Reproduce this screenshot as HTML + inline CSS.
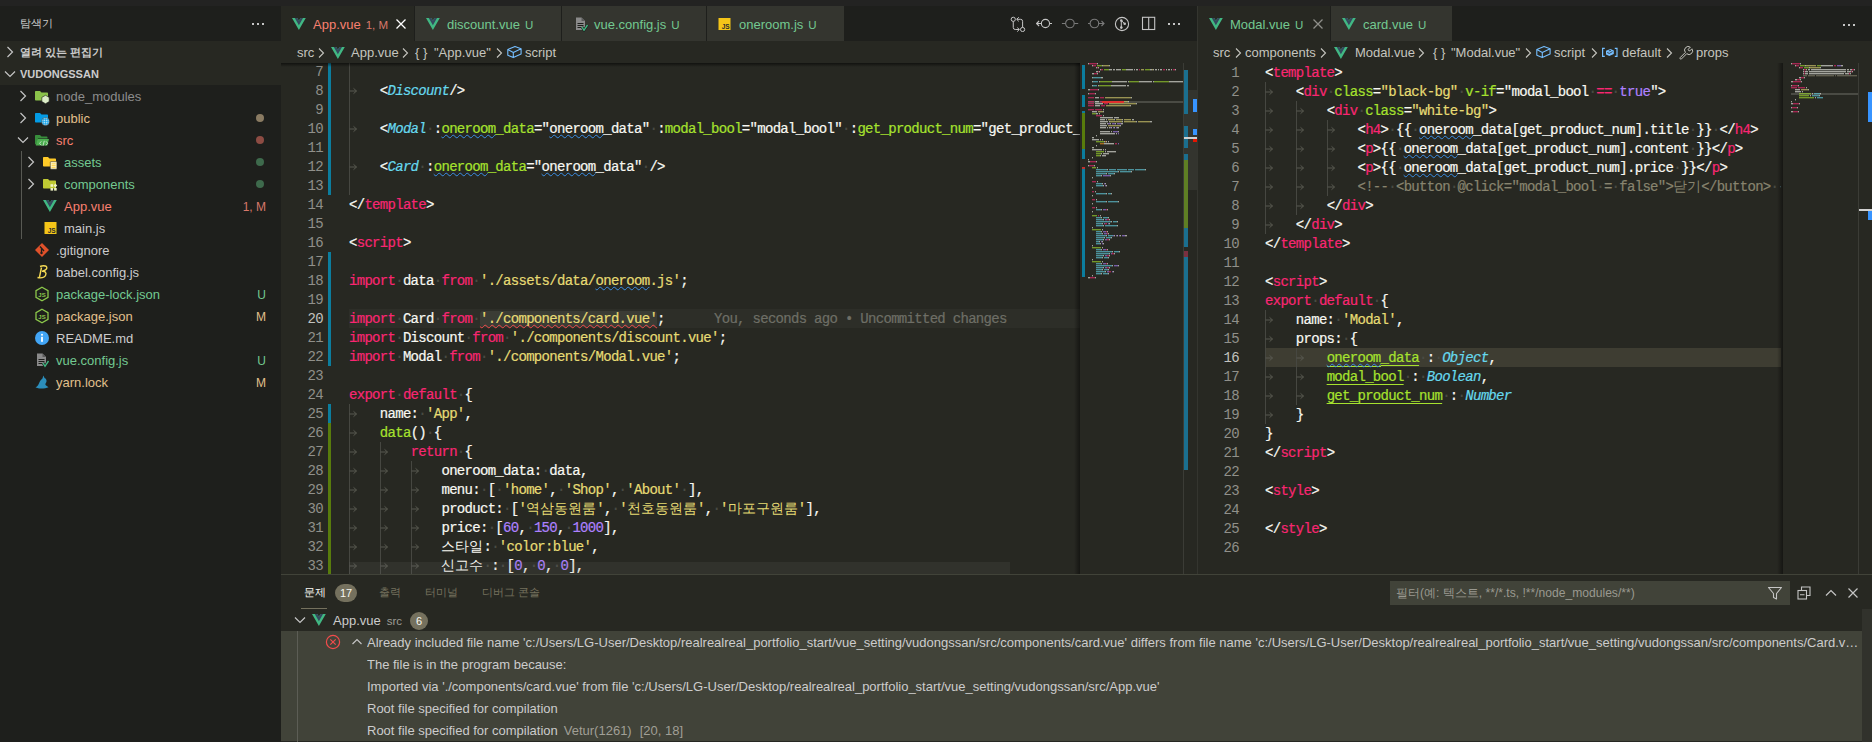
<!DOCTYPE html>
<html><head><meta charset="utf-8"><title>VS Code</title>
<style>
*{margin:0;padding:0;box-sizing:border-box}
html,body{width:1872px;height:742px;overflow:hidden;background:#1e1f1c}
body{position:relative;font-family:"Liberation Sans",sans-serif;font-size:13px;color:#cccccc}
.abs{position:absolute}
.code{position:absolute;white-space:pre;padding-top:1px;-webkit-text-stroke:0.2px currentColor;font-family:"Liberation Mono",monospace;font-size:14px;letter-spacing:-0.7px;line-height:19px;height:19px;color:#f8f8f2}
.ln{position:absolute;padding-top:1px;font-family:"Liberation Mono",monospace;font-size:14px;letter-spacing:-0.7px;line-height:19px;color:#90908a;text-align:right;width:40px}
.p{color:#f8f8f2}.t{color:#f92672}.k{color:#f92672}.c{color:#66d9ef;font-style:italic}.a{color:#a6e22e}
.s{color:#e6db74}.n{color:#ae81ff}.f{color:#a6e22e}.cm{color:#88846f}.cm .ws{color:#4a4b44}.ty{color:#66d9ef;font-style:italic}
.ws{color:#4a4b44}
.hg{font-size:13.6px;letter-spacing:0;-webkit-text-stroke:0}
.sq{text-decoration:underline wavy #3a8ee6;text-decoration-thickness:1px;text-underline-offset:1px;text-decoration-skip-ink:none}
.ul{text-decoration:underline solid #a6e22e;text-decoration-thickness:1px;text-underline-offset:3px}
.ul.sq{text-decoration:underline wavy #3a8ee6;text-decoration-thickness:1px;text-underline-offset:1px;text-decoration-skip-ink:none;border-bottom:1px solid #a6e22e}
.err{background:#3b3c35;border-radius:3px;text-decoration:underline wavy #f14c4c;text-decoration-thickness:1px;text-underline-offset:1px;text-decoration-skip-ink:none}
.guide{position:absolute;width:1px;background:#464741}
.row{position:absolute;left:0;width:281px;height:22px;line-height:22px;white-space:nowrap;padding-top:1px}
.ui{font-family:"Liberation Sans",sans-serif}
.tab{position:absolute;top:7px;height:35px;line-height:35px;white-space:nowrap;font-size:13px}
.bc{position:absolute;top:42px;height:22px;line-height:22px;white-space:nowrap;font-size:13px;color:#c5c5bf}
.chev{position:absolute}
</style></head><body>

<div class="abs" style="left:0;top:0;width:1872px;height:6px;background:#232322"></div>
<div class="abs" style="left:0;top:6px;width:281px;height:736px;background:#1e1f1c"></div>
<div class="abs ui" style="left:20px;top:6px;height:35px;line-height:35px;font-size:11px;color:#cccccc">탐색기</div>
<div class="abs" style="left:252px;top:23px;width:2px;height:2px;background:#c5c5c5"></div><div class="abs" style="left:257px;top:23px;width:2px;height:2px;background:#c5c5c5"></div><div class="abs" style="left:262px;top:23px;width:2px;height:2px;background:#c5c5c5"></div>
<div class="abs" style="left:0;top:41px;width:281px;height:44px;background:#272822"></div>
<svg class="abs" style="left:2px;top:44px" width="16" height="16" viewBox="0 0 16 16"><path d="M5.5 3 L10.5 8 L5.5 13" fill="none" stroke="#c5c5c5" stroke-width="1.2"/></svg>
<div class="abs ui" style="left:20px;top:41px;height:22px;line-height:22px;font-size:11px;font-weight:bold;color:#cccccc">열려 있는 편집기</div>
<svg class="abs" style="left:2px;top:66px" width="16" height="16" viewBox="0 0 16 16"><path d="M3 5.5 L8 10.5 L13 5.5" fill="none" stroke="#c5c5c5" stroke-width="1.2"/></svg>
<div class="abs ui" style="left:20px;top:63px;height:22px;line-height:22px;font-size:11px;font-weight:bold;color:#cccccc">VUDONGSSAN</div>
<svg class="abs" style="left:15px;top:88px" width="16" height="16" viewBox="0 0 16 16"><path d="M5.5 3 L10.5 8 L5.5 13" fill="none" stroke="#c5c5c5" stroke-width="1.2"/></svg>
<svg class="abs" style="left:34px;top:88px" width="16" height="16" viewBox="0 0 16 16"><path d="M1.8 3 h4.2 l1.5 1.5 h5.7 a0.8 0.8 0 0 1 0.8 0.8 v6.4 a0.8 0.8 0 0 1 -0.8 0.8 h-11.4 a0.8 0.8 0 0 1 -0.8 -0.8 v-7.9 a0.8 0.8 0 0 1 0.8 -0.8z" fill="#8bc34a"/><path d="M11.5 7.3 L15.2 9.4 V13.6 L11.5 15.7 L7.8 13.6 V9.4Z" fill="#dcedc8" stroke="#1e1f1c" stroke-width="0.6"/></svg>
<div class="row ui" style="top:85px;left:56px;width:auto;color:#8c8c8c">node_modules</div>
<svg class="abs" style="left:15px;top:110px" width="16" height="16" viewBox="0 0 16 16"><path d="M5.5 3 L10.5 8 L5.5 13" fill="none" stroke="#c5c5c5" stroke-width="1.2"/></svg>
<svg class="abs" style="left:34px;top:110px" width="16" height="16" viewBox="0 0 16 16"><path d="M1.8 3 h4.2 l1.5 1.5 h5.7 a0.8 0.8 0 0 1 0.8 0.8 v6.4 a0.8 0.8 0 0 1 -0.8 0.8 h-11.4 a0.8 0.8 0 0 1 -0.8 -0.8 v-7.9 a0.8 0.8 0 0 1 0.8 -0.8z" fill="#039be5"/><circle cx="11.5" cy="11.5" r="3.9" fill="#b3e5fc" stroke="#1e1f1c" stroke-width="0.5"/><path d="M7.8 11.5 H15.2 M11.5 7.8 V15.2 M8.4 9.6 H14.6 M8.4 13.4 H14.6 M9.6 8.3 Q8.8 11.5 9.6 14.7 M13.4 8.3 Q14.2 11.5 13.4 14.7" fill="none" stroke="#039be5" stroke-width=".6"/></svg>
<div class="row ui" style="top:107px;left:56px;width:auto;color:#e2c08d">public</div>
<div class="abs" style="left:256px;top:114px;width:8px;height:8px;border-radius:4px;background:#8a7b62"></div>
<svg class="abs" style="left:15px;top:132px" width="16" height="16" viewBox="0 0 16 16"><path d="M3 5.5 L8 10.5 L13 5.5" fill="none" stroke="#c5c5c5" stroke-width="1.2"/></svg>
<svg class="abs" style="left:34px;top:132px" width="16" height="16" viewBox="0 0 16 16"><path d="M1.8 3 h4.2 l1.5 1.5 h5.2 a0.8 .8 0 0 1 .8 .8 v1.2 h-9.5 l-1.7 6 h-.5 a0.8 .8 0 0 1 -.8 -.8 v-7.9 a.8 .8 0 0 1 .8 -.8z" fill="#388e3c"/><path d="M3.5 7 H15 L13.3 13.5 H1.8Z" fill="#4caf50"/><path d="M7.3 9.3 L5.6 11.3 L7.3 13.3 M10.3 8.8 L9 13.8 M12 9.3 L13.7 11.3 L12 13.3" fill="none" stroke="#c8e6c9" stroke-width="0.9"/></svg>
<div class="row ui" style="top:129px;left:56px;width:auto;color:#f88070">src</div>
<div class="abs" style="left:256px;top:136px;width:8px;height:8px;border-radius:4px;background:#8d4c43"></div>
<svg class="abs" style="left:23px;top:154px" width="16" height="16" viewBox="0 0 16 16"><path d="M5.5 3 L10.5 8 L5.5 13" fill="none" stroke="#c5c5c5" stroke-width="1.2"/></svg>
<svg class="abs" style="left:42px;top:154px" width="16" height="16" viewBox="0 0 16 16"><path d="M1.8 3 h4.2 l1.5 1.5 h5.7 a0.8 0.8 0 0 1 0.8 0.8 v6.4 a0.8 0.8 0 0 1 -0.8 0.8 h-11.4 a0.8 0.8 0 0 1 -0.8 -0.8 v-7.9 a0.8 0.8 0 0 1 0.8 -0.8z" fill="#ffca28"/><rect x="8.3" y="7.6" width="6.6" height="7.6" rx="0.6" fill="#fff3c4" stroke="#1e1f1c" stroke-width="0.5"/><path d="M9.6 9.8 H13.6 M9.6 11.6 H13.6 M9.6 13.4 H13.6" stroke="#ffca28" stroke-width=".8"/></svg>
<div class="row ui" style="top:151px;left:64px;width:auto;color:#73c991">assets</div>
<div class="abs" style="left:256px;top:158px;width:8px;height:8px;border-radius:4px;background:#3e6a4c"></div>
<svg class="abs" style="left:23px;top:176px" width="16" height="16" viewBox="0 0 16 16"><path d="M5.5 3 L10.5 8 L5.5 13" fill="none" stroke="#c5c5c5" stroke-width="1.2"/></svg>
<svg class="abs" style="left:42px;top:176px" width="16" height="16" viewBox="0 0 16 16"><path d="M1.8 3 h4.2 l1.5 1.5 h5.7 a0.8 0.8 0 0 1 0.8 0.8 v6.4 a0.8 0.8 0 0 1 -0.8 0.8 h-11.4 a0.8 0.8 0 0 1 -0.8 -0.8 v-7.9 a0.8 0.8 0 0 1 0.8 -0.8z" fill="#c0ca33"/><rect x="8.5" y="8.2" width="2.6" height="2.6" fill="#f0f4c3"/><path d="M13.4 7.6 L15.2 9.5 L13.4 11.4 L11.6 9.5Z" fill="#f0f4c3"/><rect x="8.5" y="12" width="2.6" height="2.6" fill="#f0f4c3"/><rect x="12.1" y="12" width="2.6" height="2.6" fill="#f0f4c3"/></svg>
<div class="row ui" style="top:173px;left:64px;width:auto;color:#73c991">components</div>
<div class="abs" style="left:256px;top:180px;width:8px;height:8px;border-radius:4px;background:#3e6a4c"></div>
<svg class="abs" style="left:43px;top:200px" width="13.8" height="12" viewBox="0 0 261.76 226.69"><path d="M161.096.001l-30.225 52.351L100.647.001H-.005l130.877 226.688L261.749.001z" fill="#41b883"/><path d="M161.096.001l-30.225 52.351L100.647.001H52.346l78.526 136.01L209.398.001z" fill="#35495e"/></svg>
<div class="row ui" style="top:195px;left:64px;width:auto;color:#f88070">App.vue</div>
<div class="row ui" style="top:195px;left:200px;width:66px;text-align:right;font-size:12px;color:#d8786a">1, M</div>
<svg class="abs" style="left:44px;top:221px" width="14" height="14" viewBox="0 0 14 14"><rect x="0.5" y="1" width="12" height="12" fill="#f5c518"/><text x="11.6" y="11.8" font-family="Liberation Sans" font-size="6.5" font-weight="bold" text-anchor="end" fill="#2b2b2b">JS</text></svg>
<div class="row ui" style="top:217px;left:64px;width:auto;color:#cccccc">main.js</div>
<svg class="abs" style="left:34px;top:242px" width="16" height="16" viewBox="0 0 16 16"><path d="M8 1 L15 8 L8 15 L1 8 Z" fill="#e0512a"/><path d="M6 4.5 L10 9 M7.5 6.3 V11" stroke="#1e1f1c" stroke-width="1.3" fill="none"/><circle cx="7.5" cy="11" r="1.2" fill="#1e1f1c"/></svg>
<div class="row ui" style="top:239px;left:56px;width:auto;color:#cccccc">.gitignore</div>
<svg class="abs" style="left:35px;top:264px" width="16" height="16" viewBox="0 0 16 16"><path d="M5 2.5 C9 1 13 2 11.5 4.8 C10.6 6.5 8 7 7 7.3 C10 7 12 8.5 10.5 11.5 C9 14 5 14 2.5 13.5 M6.5 3.5 L4.5 13" fill="none" stroke="#f5da55" stroke-width="1.4"/></svg>
<div class="row ui" style="top:261px;left:56px;width:auto;color:#cccccc">babel.config.js</div>
<svg class="abs" style="left:34px;top:286px" width="16" height="16" viewBox="0 0 16 16"><path d="M8 1.2 L14 4.6 V11.4 L8 14.8 L2 11.4 V4.6 Z" fill="none" stroke="#8cc84b" stroke-width="1.3"/><text x="8" y="11" font-family="Liberation Sans" font-size="6" font-weight="bold" text-anchor="middle" fill="#8cc84b">JS</text></svg>
<div class="row ui" style="top:283px;left:56px;width:auto;color:#73c991">package-lock.json</div>
<div class="row ui" style="top:283px;left:200px;width:66px;text-align:right;font-size:12px;color:#73c991">U</div>
<svg class="abs" style="left:34px;top:308px" width="16" height="16" viewBox="0 0 16 16"><path d="M8 1.2 L14 4.6 V11.4 L8 14.8 L2 11.4 V4.6 Z" fill="none" stroke="#8cc84b" stroke-width="1.3"/><text x="8" y="11" font-family="Liberation Sans" font-size="6" font-weight="bold" text-anchor="middle" fill="#8cc84b">JS</text></svg>
<div class="row ui" style="top:305px;left:56px;width:auto;color:#e2c08d">package.json</div>
<div class="row ui" style="top:305px;left:200px;width:66px;text-align:right;font-size:12px;color:#e2c08d">M</div>
<svg class="abs" style="left:34px;top:330px" width="16" height="16" viewBox="0 0 16 16"><circle cx="8" cy="8" r="7" fill="#42a5f5"/><rect x="7.1" y="6.8" width="1.8" height="5" fill="#fff"/><circle cx="8" cy="4.7" r="1" fill="#fff"/></svg>
<div class="row ui" style="top:327px;left:56px;width:auto;color:#cccccc">README.md</div>
<svg class="abs" style="left:34px;top:352px" width="16" height="16" viewBox="0 0 16 16"><path d="M3 1.5 H8.5 L12 5 V14 H3 Z" fill="#8a8a8a"/><path d="M8.5 1.5 V5 H12" fill="#5a5a5a"/><path d="M4.5 7.5 H10.5 M4.5 9.5 H10.5 M4.5 11.5 H8" stroke="#1e1f1c" stroke-width="1"/><path d="M9 11 L11 14.3 L14.5 9" fill="none" stroke="#1e1f1c" stroke-width="2.6"/><path d="M9 11 L11 14.3 L14.5 9" fill="none" stroke="#41b883" stroke-width="1.4"/></svg>
<div class="row ui" style="top:349px;left:56px;width:auto;color:#73c991">vue.config.js</div>
<div class="row ui" style="top:349px;left:200px;width:66px;text-align:right;font-size:12px;color:#73c991">U</div>
<svg class="abs" style="left:34px;top:374px" width="16" height="16" viewBox="0 0 16 16"><path d="M9.5 1.5 L10.5 4 C12 4.5 12.8 6 12.5 7.5 C12.2 9 11 9.5 11.5 11 L14.5 13.2 C12.5 14 10 14.5 7.5 14.5 C5 14.5 3 14 1.5 13.5 C3 12.8 4 11.5 4.8 9.8 C5.5 8 6.5 6 8.3 4.8 Z" fill="#2c8ebb"/></svg>
<div class="row ui" style="top:371px;left:56px;width:auto;color:#e2c08d">yarn.lock</div>
<div class="row ui" style="top:371px;left:200px;width:66px;text-align:right;font-size:12px;color:#e2c08d">M</div>
<div class="abs" style="left:21px;top:151px;width:1px;height:88px;background:#585953"></div>
<div class="abs" style="left:281px;top:6px;width:916px;height:35px;background:#1e1f1c"></div>
<div class="abs" style="left:281px;top:6px;width:133px;height:35px;background:#272822"></div><svg class="abs" style="left:292px;top:18px" width="13.8" height="12" viewBox="0 0 261.76 226.69"><path d="M161.096.001l-30.225 52.351L100.647.001H-.005l130.877 226.688L261.749.001z" fill="#41b883"/><path d="M161.096.001l-30.225 52.351L100.647.001H52.346l78.526 136.01L209.398.001z" fill="#35495e"/></svg><div class="tab ui" style="left:313px;color:#f88070">App.vue<span style="margin-left:5px;font-size:11.5px;color:#d8786a">1, M</span></div><svg class="abs" style="left:393px;top:16px" width="16" height="16" viewBox="0 0 16 16"><path d="M3.5 3.5 L12.5 12.5 M12.5 3.5 L3.5 12.5" stroke="#ffffff" stroke-width="1.3"/></svg>
<div class="abs" style="left:415px;top:6px;width:146px;height:35px;background:#34352f"></div><svg class="abs" style="left:426px;top:18px" width="13.8" height="12" viewBox="0 0 261.76 226.69"><path d="M161.096.001l-30.225 52.351L100.647.001H-.005l130.877 226.688L261.749.001z" fill="#41b883"/><path d="M161.096.001l-30.225 52.351L100.647.001H52.346l78.526 136.01L209.398.001z" fill="#35495e"/></svg><div class="tab ui" style="left:447px;color:#73c991">discount.vue<span style="margin-left:5px;font-size:11.5px;color:#73c991">U</span></div>
<div class="abs" style="left:562px;top:6px;width:144px;height:35px;background:#34352f"></div><svg class="abs" style="left:573px;top:16px" width="16" height="16" viewBox="0 0 16 16"><path d="M3 1.5 H8.5 L12 5 V14 H3 Z" fill="#8a8a8a"/><path d="M8.5 1.5 V5 H12" fill="#5a5a5a"/><path d="M4.5 7.5 H10.5 M4.5 9.5 H10.5 M4.5 11.5 H8" stroke="#1e1f1c" stroke-width="1"/><path d="M9 11 L11 14.3 L14.5 9" fill="none" stroke="#1e1f1c" stroke-width="2.6"/><path d="M9 11 L11 14.3 L14.5 9" fill="none" stroke="#41b883" stroke-width="1.4"/></svg><div class="tab ui" style="left:594px;color:#73c991">vue.config.js<span style="margin-left:5px;font-size:11.5px;color:#73c991">U</span></div>
<div class="abs" style="left:707px;top:6px;width:137px;height:35px;background:#34352f"></div><svg class="abs" style="left:718px;top:17px" width="14" height="14" viewBox="0 0 14 14"><rect x="0.5" y="1" width="12" height="12" fill="#f5c518"/><text x="11.6" y="11.8" font-family="Liberation Sans" font-size="6.5" font-weight="bold" text-anchor="end" fill="#2b2b2b">JS</text></svg><div class="tab ui" style="left:739px;color:#73c991">oneroom.js<span style="margin-left:5px;font-size:11.5px;color:#73c991">U</span></div>
<svg class="abs" style="left:1010px;top:16px" width="16" height="16" viewBox="0 0 16 16"><circle cx="3.25" cy="3.3" r="2.1" fill="none" stroke="#c5c5c5" stroke-width="1"/><circle cx="12.6" cy="13.5" r="2.1" fill="none" stroke="#c5c5c5" stroke-width="1"/><path d="M3.25 5.4 V11.5 a2 2 0 0 0 2 2 H9.2 M7.2 11.4 L9.3 13.5 L7.2 15.6" fill="none" stroke="#c5c5c5" stroke-width="1"/><path d="M12.6 11.4 V5.3 a2 2 0 0 0 -2 -2 H6.8 M8.8 1.2 L6.7 3.3 L8.8 5.4" fill="none" stroke="#c5c5c5" stroke-width="1"/></svg><svg class="abs" style="left:1036px;top:16px" width="16" height="16" viewBox="0 0 16 16"><circle cx="9.45" cy="7.5" r="4.1" fill="none" stroke="#c5c5c5" stroke-width="1.1"/><path d="M0.6 7.5 H5.3 M13.6 7.5 H16 M3.1 5 L0.6 7.5 L3.1 10" fill="none" stroke="#c5c5c5" stroke-width="1.1"/></svg><svg class="abs" style="left:1060px;top:16px" width="20" height="16" viewBox="0 0 20 16"><circle cx="9.9" cy="7.5" r="4.3" fill="none" stroke="#7a7a7a" stroke-width="1.1"/><path d="M1.9 7.5 H5.6 M14.2 7.5 H18.2" fill="none" stroke="#7a7a7a" stroke-width="1.1"/></svg><svg class="abs" style="left:1086px;top:16px" width="20" height="16" viewBox="0 0 20 16"><circle cx="8.4" cy="7.5" r="4.3" fill="none" stroke="#7a7a7a" stroke-width="1.1"/><path d="M2 7.5 H4.1 M12.7 7.5 H18 M15.5 5 L18 7.5 L15.5 10" fill="none" stroke="#7a7a7a" stroke-width="1.1"/></svg><svg class="abs" style="left:1114px;top:16px" width="16" height="16" viewBox="0 0 16 16"><circle cx="8" cy="8" r="6.6" fill="none" stroke="#c5c5c5" stroke-width="1.1"/><path d="M7.3 4.5 V11.6 M7.3 4.5 L10.7 7.75" fill="none" stroke="#c5c5c5" stroke-width="1"/><circle cx="7.3" cy="4.5" r="1.3" fill="#c5c5c5"/><circle cx="7.3" cy="11.6" r="1.3" fill="#c5c5c5"/><circle cx="10.7" cy="7.75" r="1.3" fill="#c5c5c5"/></svg><svg class="abs" style="left:1141px;top:16px" width="16" height="16" viewBox="0 0 16 16"><rect x="1.5" y="1.3" width="12.2" height="12.2" fill="none" stroke="#c5c5c5" stroke-width="1.1"/><path d="M7.7 1.3 V13.5" stroke="#c5c5c5" stroke-width="1.1"/></svg><div class="abs" style="left:1168px;top:23px;width:2px;height:2px;background:#c5c5c5"></div><div class="abs" style="left:1173px;top:23px;width:2px;height:2px;background:#c5c5c5"></div><div class="abs" style="left:1178px;top:23px;width:2px;height:2px;background:#c5c5c5"></div>
<div class="abs" style="left:281px;top:41px;width:916px;height:22px;background:#272822"></div>
<div class="bc ui" style="left:297px">src</div><svg class="abs" style="left:313px;top:45px" width="16" height="16" viewBox="0 0 16 16"><path d="M6 3.5 L10.5 8 L6 12.5" fill="none" stroke="#c5c5bf" stroke-width="1.1"/></svg><svg class="abs" style="left:331px;top:47px" width="13.8" height="12" viewBox="0 0 261.76 226.69"><path d="M161.096.001l-30.225 52.351L100.647.001H-.005l130.877 226.688L261.749.001z" fill="#41b883"/><path d="M161.096.001l-30.225 52.351L100.647.001H52.346l78.526 136.01L209.398.001z" fill="#35495e"/></svg><div class="bc ui" style="left:351px">App.vue</div><svg class="abs" style="left:397px;top:45px" width="16" height="16" viewBox="0 0 16 16"><path d="M6 3.5 L10.5 8 L6 12.5" fill="none" stroke="#c5c5bf" stroke-width="1.1"/></svg><div class="bc ui" style="left:415px">{ }</div><div class="bc ui" style="left:434px">"App.vue"</div><svg class="abs" style="left:491px;top:45px" width="16" height="16" viewBox="0 0 16 16"><path d="M6 3.5 L10.5 8 L6 12.5" fill="none" stroke="#c5c5bf" stroke-width="1.1"/></svg><svg class="abs" style="left:507px;top:45px" width="16" height="16" viewBox="0 0 16 16"><path d="M0.8 4.4 L8 1.4 L14.1 3.7 V9.1 L6.3 12.6 L0.8 10.2 Z M0.8 4.4 L6.3 7.4 L14.1 3.7 M6.3 7.4 V12.6" fill="none" stroke="#75beff" stroke-width="1.1" stroke-linejoin="round"/></svg><div class="bc ui" style="left:525px">script</div>
<div class="abs" style="left:281px;top:63px;width:916px;height:511px;background:#272822"></div>
<div class="abs" style="left:349px;top:309px;width:731px;height:19px;background:#2d2e28"></div>
<div class="abs" style="left:328px;top:62px;width:3px;height:133px;background:#0c7d9d"></div>
<div class="abs" style="left:328px;top:252px;width:3px;height:114px;background:#0c7d9d"></div>
<div class="abs" style="left:328px;top:404px;width:3px;height:19px;background:#0c7d9d"></div>
<div class="abs" style="left:328px;top:423px;width:3px;height:151px;background:#587c0c"></div>
<div class="ln" style="left:283px;top:62px;color:#90908a">7</div>
<div class="ln" style="left:283px;top:81px;color:#90908a">8</div>
<div class="ln" style="left:283px;top:100px;color:#90908a">9</div>
<div class="ln" style="left:283px;top:119px;color:#90908a">10</div>
<div class="ln" style="left:283px;top:138px;color:#90908a">11</div>
<div class="ln" style="left:283px;top:157px;color:#90908a">12</div>
<div class="ln" style="left:283px;top:176px;color:#90908a">13</div>
<div class="ln" style="left:283px;top:195px;color:#90908a">14</div>
<div class="ln" style="left:283px;top:214px;color:#90908a">15</div>
<div class="ln" style="left:283px;top:233px;color:#90908a">16</div>
<div class="ln" style="left:283px;top:252px;color:#90908a">17</div>
<div class="ln" style="left:283px;top:271px;color:#90908a">18</div>
<div class="ln" style="left:283px;top:290px;color:#90908a">19</div>
<div class="ln" style="left:283px;top:309px;color:#c2c2bf">20</div>
<div class="ln" style="left:283px;top:328px;color:#90908a">21</div>
<div class="ln" style="left:283px;top:347px;color:#90908a">22</div>
<div class="ln" style="left:283px;top:366px;color:#90908a">23</div>
<div class="ln" style="left:283px;top:385px;color:#90908a">24</div>
<div class="ln" style="left:283px;top:404px;color:#90908a">25</div>
<div class="ln" style="left:283px;top:423px;color:#90908a">26</div>
<div class="ln" style="left:283px;top:442px;color:#90908a">27</div>
<div class="ln" style="left:283px;top:461px;color:#90908a">28</div>
<div class="ln" style="left:283px;top:480px;color:#90908a">29</div>
<div class="ln" style="left:283px;top:499px;color:#90908a">30</div>
<div class="ln" style="left:283px;top:518px;color:#90908a">31</div>
<div class="ln" style="left:283px;top:537px;color:#90908a">32</div>
<div class="ln" style="left:283px;top:556px;color:#90908a">33</div>
<div class="guide" style="left:349px;top:62px;height:133px;background:#464741"></div>
<div class="guide" style="left:349px;top:404px;height:171px;background:#464741"></div>
<div class="guide" style="left:380px;top:442px;height:133px;background:#464741"></div>
<div class="guide" style="left:411px;top:461px;height:114px;background:#464741"></div>

<div class="code" style="left:349px;top:62px"></div>
<svg class="abs" style="left:349px;top:87px" width="9" height="8" viewBox="0 0 9 8"><path d="M0.5 4 H7.5 M4.5 1.3 L7.5 4 L4.5 6.7" fill="none" stroke="#585950" stroke-width="1"/></svg>
<div class="code" style="left:349px;top:81px"><span class="p">    </span><span class="p">&lt;</span><span class="c">Discount</span><span class="p">/&gt;</span></div>

<div class="code" style="left:349px;top:100px"></div>
<svg class="abs" style="left:349px;top:125px" width="9" height="8" viewBox="0 0 9 8"><path d="M0.5 4 H7.5 M4.5 1.3 L7.5 4 L4.5 6.7" fill="none" stroke="#585950" stroke-width="1"/></svg>
<div class="code" style="left:349px;top:119px"><span class="p">    </span><span class="p">&lt;</span><span class="c">Modal</span><span class="p"><span class="ws">·</span></span><span class="p">:</span><span class="a sq">oneroom</span><span class="a">_data</span><span class="p">="</span><span class="p sq">oneroom</span><span class="p">_data"</span><span class="p"><span class="ws">·</span></span><span class="p">:</span><span class="a">modal_bool</span><span class="p">="modal_bool"</span><span class="p"><span class="ws">·</span></span><span class="p">:</span><span class="a">get_product_num</span><span class="p">="get_product_num"/&gt;</span></div>

<div class="code" style="left:349px;top:138px"></div>
<svg class="abs" style="left:349px;top:163px" width="9" height="8" viewBox="0 0 9 8"><path d="M0.5 4 H7.5 M4.5 1.3 L7.5 4 L4.5 6.7" fill="none" stroke="#585950" stroke-width="1"/></svg>
<div class="code" style="left:349px;top:157px"><span class="p">    </span><span class="p">&lt;</span><span class="c">Card</span><span class="p"><span class="ws">·</span></span><span class="p">:</span><span class="a sq">oneroom</span><span class="a">_data</span><span class="p">="</span><span class="p sq">oneroom</span><span class="p">_data"</span><span class="p"><span class="ws">·</span></span><span class="p">/&gt;</span></div>

<div class="code" style="left:349px;top:176px"></div>

<div class="code" style="left:349px;top:195px"><span class="p">&lt;/</span><span class="t">template</span><span class="p">&gt;</span></div>

<div class="code" style="left:349px;top:214px"></div>

<div class="code" style="left:349px;top:233px"><span class="p">&lt;</span><span class="t">script</span><span class="p">&gt;</span></div>

<div class="code" style="left:349px;top:252px"></div>

<div class="code" style="left:349px;top:271px"><span class="k">import</span><span class="p"><span class="ws">·</span></span><span class="p">data</span><span class="p"><span class="ws">·</span></span><span class="k">from</span><span class="p"><span class="ws">·</span></span><span class="s">'./assets/data/</span><span class="s sq">oneroom</span><span class="s">.js'</span><span class="p">;</span></div>

<div class="code" style="left:349px;top:290px"></div>

<div class="code" style="left:349px;top:309px"><span class="k">import</span><span class="p"><span class="ws">·</span></span><span class="p">Card</span><span class="p"><span class="ws">·</span></span><span class="k">from</span><span class="p"><span class="ws">·</span></span><span class="s err">'./components/card.vue'</span><span class="p">;</span></div>

<div class="code" style="left:349px;top:328px"><span class="k">import</span><span class="p"><span class="ws">·</span></span><span class="p">Discount</span><span class="p"><span class="ws">·</span></span><span class="k">from</span><span class="p"><span class="ws">·</span></span><span class="s">'./components/discount.vue'</span><span class="p">;</span></div>

<div class="code" style="left:349px;top:347px"><span class="k">import</span><span class="p"><span class="ws">·</span></span><span class="p">Modal</span><span class="p"><span class="ws">·</span></span><span class="k">from</span><span class="p"><span class="ws">·</span></span><span class="s">'./components/Modal.vue'</span><span class="p">;</span></div>

<div class="code" style="left:349px;top:366px"></div>

<div class="code" style="left:349px;top:385px"><span class="k">export</span><span class="p"><span class="ws">·</span></span><span class="k">default</span><span class="p"><span class="ws">·</span></span><span class="p">{</span></div>
<svg class="abs" style="left:349px;top:410px" width="9" height="8" viewBox="0 0 9 8"><path d="M0.5 4 H7.5 M4.5 1.3 L7.5 4 L4.5 6.7" fill="none" stroke="#585950" stroke-width="1"/></svg>
<div class="code" style="left:349px;top:404px"><span class="p">    </span><span class="p">name:</span><span class="p"><span class="ws">·</span></span><span class="s">'App'</span><span class="p">,</span></div>
<svg class="abs" style="left:349px;top:429px" width="9" height="8" viewBox="0 0 9 8"><path d="M0.5 4 H7.5 M4.5 1.3 L7.5 4 L4.5 6.7" fill="none" stroke="#585950" stroke-width="1"/></svg>
<div class="code" style="left:349px;top:423px"><span class="p">    </span><span class="f">data</span><span class="p">()</span><span class="p"><span class="ws">·</span></span><span class="p">{</span></div>
<svg class="abs" style="left:349px;top:448px" width="9" height="8" viewBox="0 0 9 8"><path d="M0.5 4 H7.5 M4.5 1.3 L7.5 4 L4.5 6.7" fill="none" stroke="#585950" stroke-width="1"/></svg><svg class="abs" style="left:379.8px;top:448px" width="9" height="8" viewBox="0 0 9 8"><path d="M0.5 4 H7.5 M4.5 1.3 L7.5 4 L4.5 6.7" fill="none" stroke="#585950" stroke-width="1"/></svg>
<div class="code" style="left:349px;top:442px"><span class="p">    </span><span class="p">    </span><span class="k">return</span><span class="p"><span class="ws">·</span></span><span class="p">{</span></div>
<svg class="abs" style="left:349px;top:467px" width="9" height="8" viewBox="0 0 9 8"><path d="M0.5 4 H7.5 M4.5 1.3 L7.5 4 L4.5 6.7" fill="none" stroke="#585950" stroke-width="1"/></svg><svg class="abs" style="left:379.8px;top:467px" width="9" height="8" viewBox="0 0 9 8"><path d="M0.5 4 H7.5 M4.5 1.3 L7.5 4 L4.5 6.7" fill="none" stroke="#585950" stroke-width="1"/></svg><svg class="abs" style="left:410.6px;top:467px" width="9" height="8" viewBox="0 0 9 8"><path d="M0.5 4 H7.5 M4.5 1.3 L7.5 4 L4.5 6.7" fill="none" stroke="#585950" stroke-width="1"/></svg>
<div class="code" style="left:349px;top:461px"><span class="p">    </span><span class="p">    </span><span class="p">    </span><span class="p">oneroom_data:</span><span class="p"><span class="ws">·</span></span><span class="p">data,</span></div>
<svg class="abs" style="left:349px;top:486px" width="9" height="8" viewBox="0 0 9 8"><path d="M0.5 4 H7.5 M4.5 1.3 L7.5 4 L4.5 6.7" fill="none" stroke="#585950" stroke-width="1"/></svg><svg class="abs" style="left:379.8px;top:486px" width="9" height="8" viewBox="0 0 9 8"><path d="M0.5 4 H7.5 M4.5 1.3 L7.5 4 L4.5 6.7" fill="none" stroke="#585950" stroke-width="1"/></svg><svg class="abs" style="left:410.6px;top:486px" width="9" height="8" viewBox="0 0 9 8"><path d="M0.5 4 H7.5 M4.5 1.3 L7.5 4 L4.5 6.7" fill="none" stroke="#585950" stroke-width="1"/></svg>
<div class="code" style="left:349px;top:480px"><span class="p">    </span><span class="p">    </span><span class="p">    </span><span class="p">menu:</span><span class="p"><span class="ws">·</span></span><span class="p">[</span><span class="p"><span class="ws">·</span></span><span class="s">'home'</span><span class="p">,</span><span class="p"><span class="ws">·</span></span><span class="s">'Shop'</span><span class="p">,</span><span class="p"><span class="ws">·</span></span><span class="s">'About'</span><span class="p"><span class="ws">·</span></span><span class="p">],</span></div>
<svg class="abs" style="left:349px;top:505px" width="9" height="8" viewBox="0 0 9 8"><path d="M0.5 4 H7.5 M4.5 1.3 L7.5 4 L4.5 6.7" fill="none" stroke="#585950" stroke-width="1"/></svg><svg class="abs" style="left:379.8px;top:505px" width="9" height="8" viewBox="0 0 9 8"><path d="M0.5 4 H7.5 M4.5 1.3 L7.5 4 L4.5 6.7" fill="none" stroke="#585950" stroke-width="1"/></svg><svg class="abs" style="left:410.6px;top:505px" width="9" height="8" viewBox="0 0 9 8"><path d="M0.5 4 H7.5 M4.5 1.3 L7.5 4 L4.5 6.7" fill="none" stroke="#585950" stroke-width="1"/></svg>
<div class="code" style="left:349px;top:499px"><span class="p">    </span><span class="p">    </span><span class="p">    </span><span class="p">product:</span><span class="p"><span class="ws">·</span></span><span class="p">[</span><span class="s">'<span class="hg">역삼동원룸</span>'</span><span class="p">,</span><span class="p"><span class="ws">·</span></span><span class="s">'<span class="hg">천호동원룸</span>'</span><span class="p">,</span><span class="p"><span class="ws">·</span></span><span class="s">'<span class="hg">마포구원룸</span>'</span><span class="p">],</span></div>
<svg class="abs" style="left:349px;top:524px" width="9" height="8" viewBox="0 0 9 8"><path d="M0.5 4 H7.5 M4.5 1.3 L7.5 4 L4.5 6.7" fill="none" stroke="#585950" stroke-width="1"/></svg><svg class="abs" style="left:379.8px;top:524px" width="9" height="8" viewBox="0 0 9 8"><path d="M0.5 4 H7.5 M4.5 1.3 L7.5 4 L4.5 6.7" fill="none" stroke="#585950" stroke-width="1"/></svg><svg class="abs" style="left:410.6px;top:524px" width="9" height="8" viewBox="0 0 9 8"><path d="M0.5 4 H7.5 M4.5 1.3 L7.5 4 L4.5 6.7" fill="none" stroke="#585950" stroke-width="1"/></svg>
<div class="code" style="left:349px;top:518px"><span class="p">    </span><span class="p">    </span><span class="p">    </span><span class="p">price:</span><span class="p"><span class="ws">·</span></span><span class="p">[</span><span class="n">60</span><span class="p">,</span><span class="p"><span class="ws">·</span></span><span class="n">150</span><span class="p">,</span><span class="p"><span class="ws">·</span></span><span class="n">1000</span><span class="p">],</span></div>
<svg class="abs" style="left:349px;top:543px" width="9" height="8" viewBox="0 0 9 8"><path d="M0.5 4 H7.5 M4.5 1.3 L7.5 4 L4.5 6.7" fill="none" stroke="#585950" stroke-width="1"/></svg><svg class="abs" style="left:379.8px;top:543px" width="9" height="8" viewBox="0 0 9 8"><path d="M0.5 4 H7.5 M4.5 1.3 L7.5 4 L4.5 6.7" fill="none" stroke="#585950" stroke-width="1"/></svg><svg class="abs" style="left:410.6px;top:543px" width="9" height="8" viewBox="0 0 9 8"><path d="M0.5 4 H7.5 M4.5 1.3 L7.5 4 L4.5 6.7" fill="none" stroke="#585950" stroke-width="1"/></svg>
<div class="code" style="left:349px;top:537px"><span class="p">    </span><span class="p">    </span><span class="p">    </span><span class="p"><span class="hg">스타일</span>:</span><span class="p"><span class="ws">·</span></span><span class="s">'color:blue'</span><span class="p">,</span></div>
<svg class="abs" style="left:349px;top:562px" width="9" height="8" viewBox="0 0 9 8"><path d="M0.5 4 H7.5 M4.5 1.3 L7.5 4 L4.5 6.7" fill="none" stroke="#585950" stroke-width="1"/></svg><svg class="abs" style="left:379.8px;top:562px" width="9" height="8" viewBox="0 0 9 8"><path d="M0.5 4 H7.5 M4.5 1.3 L7.5 4 L4.5 6.7" fill="none" stroke="#585950" stroke-width="1"/></svg><svg class="abs" style="left:410.6px;top:562px" width="9" height="8" viewBox="0 0 9 8"><path d="M0.5 4 H7.5 M4.5 1.3 L7.5 4 L4.5 6.7" fill="none" stroke="#585950" stroke-width="1"/></svg>
<div class="code" style="left:349px;top:556px"><span class="p">    </span><span class="p">    </span><span class="p">    </span><span class="p"><span class="hg">신고수</span></span><span class="p"><span class="ws">·</span></span><span class="p">:</span><span class="p"><span class="ws">·</span></span><span class="p">[</span><span class="n">0</span><span class="p">,</span><span class="p"><span class="ws">·</span></span><span class="n">0</span><span class="p">,</span><span class="p"><span class="ws">·</span></span><span class="n">0</span><span class="p">],</span></div>
<div class="code" style="left:714px;top:309px;color:#6e6e66">You, seconds ago • Uncommitted changes</div>
<div class="abs" style="left:281px;top:62px;width:799px;height:1px;background:#272822"></div>
<div class="abs" style="left:349px;top:562px;width:661px;height:12px;background:rgba(121,121,121,0.12)"></div>
<div class="abs" style="left:281px;top:63px;width:799px;height:4px;background:linear-gradient(rgba(0,0,0,0.55),rgba(0,0,0,0))"></div>
<div class="abs" style="left:1080px;top:63px;width:103px;height:511px;background:#272822"></div>
<div class="abs" style="left:1074px;top:63px;width:6px;height:511px;background:linear-gradient(90deg,rgba(0,0,0,0),rgba(0,0,0,0.45))"></div>
<div class="abs" style="left:1088px;top:101px;width:95px;height:2px;background:#4a4b44"></div>
<svg class="abs" style="left:1088px;top:63px" width="95" height="250"><rect x="0" y="0" width="1" height="1" fill="#f8f8f2" fill-opacity="0.6"/><rect x="0" y="1" width="1" height="1" fill="#f8f8f2" fill-opacity="0.22"/><rect x="1" y="0" width="8" height="1" fill="#f92672" fill-opacity="0.6"/><rect x="1" y="1" width="8" height="1" fill="#f92672" fill-opacity="0.22"/><rect x="9" y="0" width="1" height="1" fill="#f8f8f2" fill-opacity="0.6"/><rect x="9" y="1" width="1" height="1" fill="#f8f8f2" fill-opacity="0.22"/><rect x="4" y="2" width="1" height="1" fill="#f8f8f2" fill-opacity="0.6"/><rect x="4" y="3" width="1" height="1" fill="#f8f8f2" fill-opacity="0.22"/><rect x="5" y="2" width="3" height="1" fill="#f92672" fill-opacity="0.6"/><rect x="5" y="3" width="3" height="1" fill="#f92672" fill-opacity="0.22"/><rect x="9" y="2" width="5" height="1" fill="#a6e22e" fill-opacity="0.6"/><rect x="9" y="3" width="5" height="1" fill="#a6e22e" fill-opacity="0.22"/><rect x="14" y="2" width="1" height="1" fill="#f8f8f2" fill-opacity="0.6"/><rect x="14" y="3" width="1" height="1" fill="#f8f8f2" fill-opacity="0.22"/><rect x="15" y="2" width="6" height="1" fill="#e6db74" fill-opacity="0.6"/><rect x="15" y="3" width="6" height="1" fill="#e6db74" fill-opacity="0.22"/><rect x="21" y="2" width="1" height="1" fill="#f8f8f2" fill-opacity="0.6"/><rect x="21" y="3" width="1" height="1" fill="#f8f8f2" fill-opacity="0.22"/><rect x="8" y="4" width="1" height="1" fill="#f8f8f2" fill-opacity="0.6"/><rect x="8" y="5" width="1" height="1" fill="#f8f8f2" fill-opacity="0.22"/><rect x="9" y="4" width="1" height="1" fill="#f92672" fill-opacity="0.6"/><rect x="9" y="5" width="1" height="1" fill="#f92672" fill-opacity="0.22"/><rect x="10" y="4" width="1" height="1" fill="#f8f8f2" fill-opacity="0.6"/><rect x="10" y="5" width="1" height="1" fill="#f8f8f2" fill-opacity="0.22"/><rect x="12" y="6" width="1" height="1" fill="#f8f8f2" fill-opacity="0.6"/><rect x="12" y="7" width="1" height="1" fill="#f8f8f2" fill-opacity="0.22"/><rect x="13" y="6" width="2" height="1" fill="#f92672" fill-opacity="0.6"/><rect x="13" y="7" width="2" height="1" fill="#f92672" fill-opacity="0.22"/><rect x="16" y="6" width="5" height="1" fill="#a6e22e" fill-opacity="0.6"/><rect x="16" y="7" width="5" height="1" fill="#a6e22e" fill-opacity="0.22"/><rect x="21" y="6" width="3" height="1" fill="#f8f8f2" fill-opacity="0.6"/><rect x="21" y="7" width="3" height="1" fill="#f8f8f2" fill-opacity="0.22"/><rect x="25" y="6" width="2" height="1" fill="#f8f8f2" fill-opacity="0.6"/><rect x="25" y="7" width="2" height="1" fill="#f8f8f2" fill-opacity="0.22"/><rect x="28" y="6" width="5" height="1" fill="#f8f8f2" fill-opacity="0.6"/><rect x="28" y="7" width="5" height="1" fill="#f8f8f2" fill-opacity="0.22"/><rect x="34" y="6" width="4" height="1" fill="#a6e22e" fill-opacity="0.6"/><rect x="34" y="7" width="4" height="1" fill="#a6e22e" fill-opacity="0.22"/><rect x="38" y="6" width="7" height="1" fill="#f8f8f2" fill-opacity="0.6"/><rect x="38" y="7" width="7" height="1" fill="#f8f8f2" fill-opacity="0.22"/><rect x="46" y="6" width="1" height="1" fill="#f8f8f2" fill-opacity="0.6"/><rect x="46" y="7" width="1" height="1" fill="#f8f8f2" fill-opacity="0.22"/><rect x="48" y="6" width="2" height="1" fill="#f8f8f2" fill-opacity="0.6"/><rect x="48" y="7" width="2" height="1" fill="#f8f8f2" fill-opacity="0.22"/><rect x="51" y="6" width="1" height="1" fill="#f92672" fill-opacity="0.6"/><rect x="51" y="7" width="1" height="1" fill="#f92672" fill-opacity="0.22"/><rect x="53" y="6" width="3" height="1" fill="#e6db74" fill-opacity="0.6"/><rect x="53" y="7" width="3" height="1" fill="#e6db74" fill-opacity="0.22"/><rect x="57" y="6" width="5" height="1" fill="#a6e22e" fill-opacity="0.6"/><rect x="57" y="7" width="5" height="1" fill="#a6e22e" fill-opacity="0.22"/><rect x="62" y="6" width="2" height="1" fill="#f8f8f2" fill-opacity="0.6"/><rect x="62" y="7" width="2" height="1" fill="#f8f8f2" fill-opacity="0.22"/><rect x="64" y="6" width="1" height="1" fill="#e6db74" fill-opacity="0.6"/><rect x="64" y="7" width="1" height="1" fill="#e6db74" fill-opacity="0.22"/><rect x="65" y="6" width="1" height="1" fill="#f8f8f2" fill-opacity="0.6"/><rect x="65" y="7" width="1" height="1" fill="#f8f8f2" fill-opacity="0.22"/><rect x="67" y="6" width="2" height="1" fill="#f8f8f2" fill-opacity="0.6"/><rect x="67" y="7" width="2" height="1" fill="#f8f8f2" fill-opacity="0.22"/><rect x="70" y="6" width="1" height="1" fill="#f8f8f2" fill-opacity="0.6"/><rect x="70" y="7" width="1" height="1" fill="#f8f8f2" fill-opacity="0.22"/><rect x="72" y="6" width="2" height="1" fill="#f8f8f2" fill-opacity="0.6"/><rect x="72" y="7" width="2" height="1" fill="#f8f8f2" fill-opacity="0.22"/><rect x="75" y="6" width="2" height="1" fill="#f92672" fill-opacity="0.6"/><rect x="75" y="7" width="2" height="1" fill="#f92672" fill-opacity="0.22"/><rect x="78" y="6" width="1" height="1" fill="#f8f8f2" fill-opacity="0.6"/><rect x="78" y="7" width="1" height="1" fill="#f8f8f2" fill-opacity="0.22"/><rect x="80" y="6" width="2" height="1" fill="#f8f8f2" fill-opacity="0.6"/><rect x="80" y="7" width="2" height="1" fill="#f8f8f2" fill-opacity="0.22"/><rect x="83" y="6" width="1" height="1" fill="#f8f8f2" fill-opacity="0.6"/><rect x="83" y="7" width="1" height="1" fill="#f8f8f2" fill-opacity="0.22"/><rect x="85" y="6" width="2" height="1" fill="#f92672" fill-opacity="0.6"/><rect x="85" y="7" width="2" height="1" fill="#f92672" fill-opacity="0.22"/><rect x="87" y="6" width="1" height="1" fill="#f8f8f2" fill-opacity="0.6"/><rect x="87" y="7" width="1" height="1" fill="#f8f8f2" fill-opacity="0.22"/><rect x="8" y="8" width="2" height="1" fill="#f8f8f2" fill-opacity="0.6"/><rect x="8" y="9" width="2" height="1" fill="#f8f8f2" fill-opacity="0.22"/><rect x="10" y="8" width="1" height="1" fill="#f92672" fill-opacity="0.6"/><rect x="10" y="9" width="1" height="1" fill="#f92672" fill-opacity="0.22"/><rect x="11" y="8" width="1" height="1" fill="#f8f8f2" fill-opacity="0.6"/><rect x="11" y="9" width="1" height="1" fill="#f8f8f2" fill-opacity="0.22"/><rect x="4" y="10" width="2" height="1" fill="#f8f8f2" fill-opacity="0.6"/><rect x="4" y="11" width="2" height="1" fill="#f8f8f2" fill-opacity="0.22"/><rect x="6" y="10" width="3" height="1" fill="#f92672" fill-opacity="0.6"/><rect x="6" y="11" width="3" height="1" fill="#f92672" fill-opacity="0.22"/><rect x="9" y="10" width="1" height="1" fill="#f8f8f2" fill-opacity="0.6"/><rect x="9" y="11" width="1" height="1" fill="#f8f8f2" fill-opacity="0.22"/><rect x="4" y="14" width="1" height="1" fill="#f8f8f2" fill-opacity="0.6"/><rect x="4" y="15" width="1" height="1" fill="#f8f8f2" fill-opacity="0.22"/><rect x="5" y="14" width="8" height="1" fill="#66d9ef" fill-opacity="0.6"/><rect x="5" y="15" width="8" height="1" fill="#66d9ef" fill-opacity="0.22"/><rect x="13" y="14" width="2" height="1" fill="#f8f8f2" fill-opacity="0.6"/><rect x="13" y="15" width="2" height="1" fill="#f8f8f2" fill-opacity="0.22"/><rect x="4" y="18" width="1" height="1" fill="#f8f8f2" fill-opacity="0.6"/><rect x="4" y="19" width="1" height="1" fill="#f8f8f2" fill-opacity="0.22"/><rect x="5" y="18" width="5" height="1" fill="#66d9ef" fill-opacity="0.6"/><rect x="5" y="19" width="5" height="1" fill="#66d9ef" fill-opacity="0.22"/><rect x="11" y="18" width="1" height="1" fill="#f8f8f2" fill-opacity="0.6"/><rect x="11" y="19" width="1" height="1" fill="#f8f8f2" fill-opacity="0.22"/><rect x="12" y="18" width="12" height="1" fill="#a6e22e" fill-opacity="0.6"/><rect x="12" y="19" width="12" height="1" fill="#a6e22e" fill-opacity="0.22"/><rect x="24" y="18" width="15" height="1" fill="#f8f8f2" fill-opacity="0.6"/><rect x="24" y="19" width="15" height="1" fill="#f8f8f2" fill-opacity="0.22"/><rect x="40" y="18" width="1" height="1" fill="#f8f8f2" fill-opacity="0.6"/><rect x="40" y="19" width="1" height="1" fill="#f8f8f2" fill-opacity="0.22"/><rect x="41" y="18" width="10" height="1" fill="#a6e22e" fill-opacity="0.6"/><rect x="41" y="19" width="10" height="1" fill="#a6e22e" fill-opacity="0.22"/><rect x="51" y="18" width="13" height="1" fill="#f8f8f2" fill-opacity="0.6"/><rect x="51" y="19" width="13" height="1" fill="#f8f8f2" fill-opacity="0.22"/><rect x="65" y="18" width="1" height="1" fill="#f8f8f2" fill-opacity="0.6"/><rect x="65" y="19" width="1" height="1" fill="#f8f8f2" fill-opacity="0.22"/><rect x="66" y="18" width="15" height="1" fill="#a6e22e" fill-opacity="0.6"/><rect x="66" y="19" width="15" height="1" fill="#a6e22e" fill-opacity="0.22"/><rect x="81" y="18" width="14" height="1" fill="#f8f8f2" fill-opacity="0.6"/><rect x="81" y="19" width="14" height="1" fill="#f8f8f2" fill-opacity="0.22"/><rect x="4" y="22" width="1" height="1" fill="#f8f8f2" fill-opacity="0.6"/><rect x="4" y="23" width="1" height="1" fill="#f8f8f2" fill-opacity="0.22"/><rect x="5" y="22" width="4" height="1" fill="#66d9ef" fill-opacity="0.6"/><rect x="5" y="23" width="4" height="1" fill="#66d9ef" fill-opacity="0.22"/><rect x="10" y="22" width="1" height="1" fill="#f8f8f2" fill-opacity="0.6"/><rect x="10" y="23" width="1" height="1" fill="#f8f8f2" fill-opacity="0.22"/><rect x="11" y="22" width="12" height="1" fill="#a6e22e" fill-opacity="0.6"/><rect x="11" y="23" width="12" height="1" fill="#a6e22e" fill-opacity="0.22"/><rect x="23" y="22" width="15" height="1" fill="#f8f8f2" fill-opacity="0.6"/><rect x="23" y="23" width="15" height="1" fill="#f8f8f2" fill-opacity="0.22"/><rect x="39" y="22" width="2" height="1" fill="#f8f8f2" fill-opacity="0.6"/><rect x="39" y="23" width="2" height="1" fill="#f8f8f2" fill-opacity="0.22"/><rect x="0" y="26" width="2" height="1" fill="#f8f8f2" fill-opacity="0.6"/><rect x="0" y="27" width="2" height="1" fill="#f8f8f2" fill-opacity="0.22"/><rect x="2" y="26" width="8" height="1" fill="#f92672" fill-opacity="0.6"/><rect x="2" y="27" width="8" height="1" fill="#f92672" fill-opacity="0.22"/><rect x="10" y="26" width="1" height="1" fill="#f8f8f2" fill-opacity="0.6"/><rect x="10" y="27" width="1" height="1" fill="#f8f8f2" fill-opacity="0.22"/><rect x="0" y="30" width="1" height="1" fill="#f8f8f2" fill-opacity="0.6"/><rect x="0" y="31" width="1" height="1" fill="#f8f8f2" fill-opacity="0.22"/><rect x="1" y="30" width="6" height="1" fill="#f92672" fill-opacity="0.6"/><rect x="1" y="31" width="6" height="1" fill="#f92672" fill-opacity="0.22"/><rect x="7" y="30" width="1" height="1" fill="#f8f8f2" fill-opacity="0.6"/><rect x="7" y="31" width="1" height="1" fill="#f8f8f2" fill-opacity="0.22"/><rect x="0" y="34" width="6" height="1" fill="#f92672" fill-opacity="0.6"/><rect x="0" y="35" width="6" height="1" fill="#f92672" fill-opacity="0.22"/><rect x="7" y="34" width="4" height="1" fill="#f8f8f2" fill-opacity="0.6"/><rect x="7" y="35" width="4" height="1" fill="#f8f8f2" fill-opacity="0.22"/><rect x="12" y="34" width="4" height="1" fill="#f92672" fill-opacity="0.6"/><rect x="12" y="35" width="4" height="1" fill="#f92672" fill-opacity="0.22"/><rect x="17" y="34" width="26" height="1" fill="#e6db74" fill-opacity="0.6"/><rect x="17" y="35" width="26" height="1" fill="#e6db74" fill-opacity="0.22"/><rect x="43" y="34" width="1" height="1" fill="#f8f8f2" fill-opacity="0.6"/><rect x="43" y="35" width="1" height="1" fill="#f8f8f2" fill-opacity="0.22"/><rect x="0" y="38" width="6" height="1" fill="#f92672" fill-opacity="0.6"/><rect x="0" y="39" width="6" height="1" fill="#f92672" fill-opacity="0.22"/><rect x="7" y="38" width="4" height="1" fill="#f8f8f2" fill-opacity="0.6"/><rect x="7" y="39" width="4" height="1" fill="#f8f8f2" fill-opacity="0.22"/><rect x="12" y="38" width="4" height="1" fill="#f92672" fill-opacity="0.6"/><rect x="12" y="39" width="4" height="1" fill="#f92672" fill-opacity="0.22"/><rect x="17" y="38" width="23" height="1" fill="#e6db74" fill-opacity="0.6"/><rect x="17" y="39" width="23" height="1" fill="#e6db74" fill-opacity="0.22"/><rect x="40" y="38" width="1" height="1" fill="#f8f8f2" fill-opacity="0.6"/><rect x="40" y="39" width="1" height="1" fill="#f8f8f2" fill-opacity="0.22"/><rect x="0" y="40" width="6" height="1" fill="#f92672" fill-opacity="0.6"/><rect x="0" y="41" width="6" height="1" fill="#f92672" fill-opacity="0.22"/><rect x="7" y="40" width="8" height="1" fill="#f8f8f2" fill-opacity="0.6"/><rect x="7" y="41" width="8" height="1" fill="#f8f8f2" fill-opacity="0.22"/><rect x="16" y="40" width="4" height="1" fill="#f92672" fill-opacity="0.6"/><rect x="16" y="41" width="4" height="1" fill="#f92672" fill-opacity="0.22"/><rect x="21" y="40" width="27" height="1" fill="#e6db74" fill-opacity="0.6"/><rect x="21" y="41" width="27" height="1" fill="#e6db74" fill-opacity="0.22"/><rect x="48" y="40" width="1" height="1" fill="#f8f8f2" fill-opacity="0.6"/><rect x="48" y="41" width="1" height="1" fill="#f8f8f2" fill-opacity="0.22"/><rect x="0" y="42" width="6" height="1" fill="#f92672" fill-opacity="0.6"/><rect x="0" y="43" width="6" height="1" fill="#f92672" fill-opacity="0.22"/><rect x="7" y="42" width="5" height="1" fill="#f8f8f2" fill-opacity="0.6"/><rect x="7" y="43" width="5" height="1" fill="#f8f8f2" fill-opacity="0.22"/><rect x="13" y="42" width="4" height="1" fill="#f92672" fill-opacity="0.6"/><rect x="13" y="43" width="4" height="1" fill="#f92672" fill-opacity="0.22"/><rect x="18" y="42" width="24" height="1" fill="#e6db74" fill-opacity="0.6"/><rect x="18" y="43" width="24" height="1" fill="#e6db74" fill-opacity="0.22"/><rect x="42" y="42" width="1" height="1" fill="#f8f8f2" fill-opacity="0.6"/><rect x="42" y="43" width="1" height="1" fill="#f8f8f2" fill-opacity="0.22"/><rect x="0" y="46" width="6" height="1" fill="#f92672" fill-opacity="0.6"/><rect x="0" y="47" width="6" height="1" fill="#f92672" fill-opacity="0.22"/><rect x="7" y="46" width="7" height="1" fill="#f92672" fill-opacity="0.6"/><rect x="7" y="47" width="7" height="1" fill="#f92672" fill-opacity="0.22"/><rect x="15" y="46" width="1" height="1" fill="#f8f8f2" fill-opacity="0.6"/><rect x="15" y="47" width="1" height="1" fill="#f8f8f2" fill-opacity="0.22"/><rect x="4" y="48" width="5" height="1" fill="#f8f8f2" fill-opacity="0.6"/><rect x="4" y="49" width="5" height="1" fill="#f8f8f2" fill-opacity="0.22"/><rect x="10" y="48" width="5" height="1" fill="#e6db74" fill-opacity="0.6"/><rect x="10" y="49" width="5" height="1" fill="#e6db74" fill-opacity="0.22"/><rect x="15" y="48" width="1" height="1" fill="#f8f8f2" fill-opacity="0.6"/><rect x="15" y="49" width="1" height="1" fill="#f8f8f2" fill-opacity="0.22"/><rect x="4" y="50" width="4" height="1" fill="#a6e22e" fill-opacity="0.6"/><rect x="4" y="51" width="4" height="1" fill="#a6e22e" fill-opacity="0.22"/><rect x="8" y="50" width="2" height="1" fill="#f8f8f2" fill-opacity="0.6"/><rect x="8" y="51" width="2" height="1" fill="#f8f8f2" fill-opacity="0.22"/><rect x="11" y="50" width="1" height="1" fill="#f8f8f2" fill-opacity="0.6"/><rect x="11" y="51" width="1" height="1" fill="#f8f8f2" fill-opacity="0.22"/><rect x="8" y="52" width="6" height="1" fill="#f92672" fill-opacity="0.6"/><rect x="8" y="53" width="6" height="1" fill="#f92672" fill-opacity="0.22"/><rect x="15" y="52" width="1" height="1" fill="#f8f8f2" fill-opacity="0.6"/><rect x="15" y="53" width="1" height="1" fill="#f8f8f2" fill-opacity="0.22"/><rect x="12" y="54" width="13" height="1" fill="#f8f8f2" fill-opacity="0.6"/><rect x="12" y="55" width="13" height="1" fill="#f8f8f2" fill-opacity="0.22"/><rect x="26" y="54" width="5" height="1" fill="#f8f8f2" fill-opacity="0.6"/><rect x="26" y="55" width="5" height="1" fill="#f8f8f2" fill-opacity="0.22"/><rect x="12" y="56" width="5" height="1" fill="#f8f8f2" fill-opacity="0.6"/><rect x="12" y="57" width="5" height="1" fill="#f8f8f2" fill-opacity="0.22"/><rect x="18" y="56" width="1" height="1" fill="#f8f8f2" fill-opacity="0.6"/><rect x="18" y="57" width="1" height="1" fill="#f8f8f2" fill-opacity="0.22"/><rect x="20" y="56" width="6" height="1" fill="#e6db74" fill-opacity="0.6"/><rect x="20" y="57" width="6" height="1" fill="#e6db74" fill-opacity="0.22"/><rect x="26" y="56" width="1" height="1" fill="#f8f8f2" fill-opacity="0.6"/><rect x="26" y="57" width="1" height="1" fill="#f8f8f2" fill-opacity="0.22"/><rect x="28" y="56" width="6" height="1" fill="#e6db74" fill-opacity="0.6"/><rect x="28" y="57" width="6" height="1" fill="#e6db74" fill-opacity="0.22"/><rect x="34" y="56" width="1" height="1" fill="#f8f8f2" fill-opacity="0.6"/><rect x="34" y="57" width="1" height="1" fill="#f8f8f2" fill-opacity="0.22"/><rect x="36" y="56" width="7" height="1" fill="#e6db74" fill-opacity="0.6"/><rect x="36" y="57" width="7" height="1" fill="#e6db74" fill-opacity="0.22"/><rect x="44" y="56" width="2" height="1" fill="#f8f8f2" fill-opacity="0.6"/><rect x="44" y="57" width="2" height="1" fill="#f8f8f2" fill-opacity="0.22"/><rect x="12" y="58" width="8" height="1" fill="#f8f8f2" fill-opacity="0.6"/><rect x="12" y="59" width="8" height="1" fill="#f8f8f2" fill-opacity="0.22"/><rect x="21" y="58" width="1" height="1" fill="#f8f8f2" fill-opacity="0.6"/><rect x="21" y="59" width="1" height="1" fill="#f8f8f2" fill-opacity="0.22"/><rect x="22" y="58" width="12" height="1" fill="#e6db74" fill-opacity="0.6"/><rect x="22" y="59" width="12" height="1" fill="#e6db74" fill-opacity="0.22"/><rect x="34" y="58" width="1" height="1" fill="#f8f8f2" fill-opacity="0.6"/><rect x="34" y="59" width="1" height="1" fill="#f8f8f2" fill-opacity="0.22"/><rect x="36" y="58" width="12" height="1" fill="#e6db74" fill-opacity="0.6"/><rect x="36" y="59" width="12" height="1" fill="#e6db74" fill-opacity="0.22"/><rect x="48" y="58" width="1" height="1" fill="#f8f8f2" fill-opacity="0.6"/><rect x="48" y="59" width="1" height="1" fill="#f8f8f2" fill-opacity="0.22"/><rect x="50" y="58" width="12" height="1" fill="#e6db74" fill-opacity="0.6"/><rect x="50" y="59" width="12" height="1" fill="#e6db74" fill-opacity="0.22"/><rect x="62" y="58" width="2" height="1" fill="#f8f8f2" fill-opacity="0.6"/><rect x="62" y="59" width="2" height="1" fill="#f8f8f2" fill-opacity="0.22"/><rect x="12" y="60" width="6" height="1" fill="#f8f8f2" fill-opacity="0.6"/><rect x="12" y="61" width="6" height="1" fill="#f8f8f2" fill-opacity="0.22"/><rect x="19" y="60" width="1" height="1" fill="#f8f8f2" fill-opacity="0.6"/><rect x="19" y="61" width="1" height="1" fill="#f8f8f2" fill-opacity="0.22"/><rect x="20" y="60" width="2" height="1" fill="#ae81ff" fill-opacity="0.6"/><rect x="20" y="61" width="2" height="1" fill="#ae81ff" fill-opacity="0.22"/><rect x="22" y="60" width="1" height="1" fill="#f8f8f2" fill-opacity="0.6"/><rect x="22" y="61" width="1" height="1" fill="#f8f8f2" fill-opacity="0.22"/><rect x="24" y="60" width="3" height="1" fill="#ae81ff" fill-opacity="0.6"/><rect x="24" y="61" width="3" height="1" fill="#ae81ff" fill-opacity="0.22"/><rect x="27" y="60" width="1" height="1" fill="#f8f8f2" fill-opacity="0.6"/><rect x="27" y="61" width="1" height="1" fill="#f8f8f2" fill-opacity="0.22"/><rect x="29" y="60" width="4" height="1" fill="#ae81ff" fill-opacity="0.6"/><rect x="29" y="61" width="4" height="1" fill="#ae81ff" fill-opacity="0.22"/><rect x="33" y="60" width="2" height="1" fill="#f8f8f2" fill-opacity="0.6"/><rect x="33" y="61" width="2" height="1" fill="#f8f8f2" fill-opacity="0.22"/><rect x="12" y="62" width="7" height="1" fill="#f8f8f2" fill-opacity="0.6"/><rect x="12" y="63" width="7" height="1" fill="#f8f8f2" fill-opacity="0.22"/><rect x="20" y="62" width="12" height="1" fill="#e6db74" fill-opacity="0.6"/><rect x="20" y="63" width="12" height="1" fill="#e6db74" fill-opacity="0.22"/><rect x="32" y="62" width="1" height="1" fill="#f8f8f2" fill-opacity="0.6"/><rect x="32" y="63" width="1" height="1" fill="#f8f8f2" fill-opacity="0.22"/><rect x="12" y="64" width="6" height="1" fill="#f8f8f2" fill-opacity="0.6"/><rect x="12" y="65" width="6" height="1" fill="#f8f8f2" fill-opacity="0.22"/><rect x="19" y="64" width="1" height="1" fill="#f8f8f2" fill-opacity="0.6"/><rect x="19" y="65" width="1" height="1" fill="#f8f8f2" fill-opacity="0.22"/><rect x="21" y="64" width="1" height="1" fill="#f8f8f2" fill-opacity="0.6"/><rect x="21" y="65" width="1" height="1" fill="#f8f8f2" fill-opacity="0.22"/><rect x="22" y="64" width="1" height="1" fill="#ae81ff" fill-opacity="0.6"/><rect x="22" y="65" width="1" height="1" fill="#ae81ff" fill-opacity="0.22"/><rect x="23" y="64" width="1" height="1" fill="#f8f8f2" fill-opacity="0.6"/><rect x="23" y="65" width="1" height="1" fill="#f8f8f2" fill-opacity="0.22"/><rect x="25" y="64" width="1" height="1" fill="#ae81ff" fill-opacity="0.6"/><rect x="25" y="65" width="1" height="1" fill="#ae81ff" fill-opacity="0.22"/><rect x="26" y="64" width="1" height="1" fill="#f8f8f2" fill-opacity="0.6"/><rect x="26" y="65" width="1" height="1" fill="#f8f8f2" fill-opacity="0.22"/><rect x="28" y="64" width="1" height="1" fill="#ae81ff" fill-opacity="0.6"/><rect x="28" y="65" width="1" height="1" fill="#ae81ff" fill-opacity="0.22"/><rect x="29" y="64" width="2" height="1" fill="#f8f8f2" fill-opacity="0.6"/><rect x="29" y="65" width="2" height="1" fill="#f8f8f2" fill-opacity="0.22"/><rect x="12" y="68" width="10" height="1" fill="#f8f8f2" fill-opacity="0.6"/><rect x="12" y="69" width="10" height="1" fill="#f8f8f2" fill-opacity="0.22"/><rect x="23" y="68" width="1" height="1" fill="#f8f8f2" fill-opacity="0.6"/><rect x="23" y="69" width="1" height="1" fill="#f8f8f2" fill-opacity="0.22"/><rect x="25" y="68" width="5" height="1" fill="#ae81ff" fill-opacity="0.6"/><rect x="25" y="69" width="5" height="1" fill="#ae81ff" fill-opacity="0.22"/><rect x="30" y="68" width="1" height="1" fill="#f8f8f2" fill-opacity="0.6"/><rect x="30" y="69" width="1" height="1" fill="#f8f8f2" fill-opacity="0.22"/><rect x="12" y="70" width="15" height="1" fill="#f8f8f2" fill-opacity="0.6"/><rect x="12" y="71" width="15" height="1" fill="#f8f8f2" fill-opacity="0.22"/><rect x="28" y="70" width="1" height="1" fill="#f8f8f2" fill-opacity="0.6"/><rect x="28" y="71" width="1" height="1" fill="#f8f8f2" fill-opacity="0.22"/><rect x="30" y="70" width="1" height="1" fill="#ae81ff" fill-opacity="0.6"/><rect x="30" y="71" width="1" height="1" fill="#ae81ff" fill-opacity="0.22"/><rect x="8" y="72" width="1" height="1" fill="#f8f8f2" fill-opacity="0.6"/><rect x="8" y="73" width="1" height="1" fill="#f8f8f2" fill-opacity="0.22"/><rect x="4" y="74" width="2" height="1" fill="#f8f8f2" fill-opacity="0.6"/><rect x="4" y="75" width="2" height="1" fill="#f8f8f2" fill-opacity="0.22"/><rect x="4" y="76" width="7" height="1" fill="#f8f8f2" fill-opacity="0.6"/><rect x="4" y="77" width="7" height="1" fill="#f8f8f2" fill-opacity="0.22"/><rect x="12" y="76" width="1" height="1" fill="#f8f8f2" fill-opacity="0.6"/><rect x="12" y="77" width="1" height="1" fill="#f8f8f2" fill-opacity="0.22"/><rect x="14" y="76" width="1" height="1" fill="#f8f8f2" fill-opacity="0.6"/><rect x="14" y="77" width="1" height="1" fill="#f8f8f2" fill-opacity="0.22"/><rect x="8" y="78" width="8" height="1" fill="#a6e22e" fill-opacity="0.6"/><rect x="8" y="79" width="8" height="1" fill="#a6e22e" fill-opacity="0.22"/><rect x="16" y="78" width="1" height="1" fill="#f8f8f2" fill-opacity="0.6"/><rect x="16" y="79" width="1" height="1" fill="#f8f8f2" fill-opacity="0.22"/><rect x="17" y="78" width="1" height="1" fill="#fd971f" fill-opacity="0.6"/><rect x="17" y="79" width="1" height="1" fill="#fd971f" fill-opacity="0.22"/><rect x="18" y="78" width="1" height="1" fill="#f8f8f2" fill-opacity="0.6"/><rect x="18" y="79" width="1" height="1" fill="#f8f8f2" fill-opacity="0.22"/><rect x="20" y="78" width="1" height="1" fill="#f8f8f2" fill-opacity="0.6"/><rect x="20" y="79" width="1" height="1" fill="#f8f8f2" fill-opacity="0.22"/><rect x="12" y="80" width="4" height="1" fill="#fd971f" fill-opacity="0.6"/><rect x="12" y="81" width="4" height="1" fill="#fd971f" fill-opacity="0.22"/><rect x="16" y="80" width="10" height="1" fill="#f8f8f2" fill-opacity="0.6"/><rect x="16" y="81" width="10" height="1" fill="#f8f8f2" fill-opacity="0.22"/><rect x="27" y="80" width="2" height="1" fill="#f92672" fill-opacity="0.6"/><rect x="27" y="81" width="2" height="1" fill="#f92672" fill-opacity="0.22"/><rect x="30" y="80" width="1" height="1" fill="#ae81ff" fill-opacity="0.6"/><rect x="30" y="81" width="1" height="1" fill="#ae81ff" fill-opacity="0.22"/><rect x="8" y="82" width="1" height="1" fill="#f8f8f2" fill-opacity="0.6"/><rect x="8" y="83" width="1" height="1" fill="#f8f8f2" fill-opacity="0.22"/><rect x="4" y="84" width="2" height="1" fill="#f8f8f2" fill-opacity="0.6"/><rect x="4" y="85" width="2" height="1" fill="#f8f8f2" fill-opacity="0.22"/><rect x="4" y="86" width="10" height="1" fill="#f8f8f2" fill-opacity="0.6"/><rect x="4" y="87" width="10" height="1" fill="#f8f8f2" fill-opacity="0.22"/><rect x="15" y="86" width="1" height="1" fill="#f8f8f2" fill-opacity="0.6"/><rect x="15" y="87" width="1" height="1" fill="#f8f8f2" fill-opacity="0.22"/><rect x="17" y="86" width="1" height="1" fill="#f8f8f2" fill-opacity="0.6"/><rect x="17" y="87" width="1" height="1" fill="#f8f8f2" fill-opacity="0.22"/><rect x="8" y="88" width="8" height="1" fill="#a6e22e" fill-opacity="0.6"/><rect x="8" y="89" width="8" height="1" fill="#a6e22e" fill-opacity="0.22"/><rect x="17" y="88" width="1" height="1" fill="#f8f8f2" fill-opacity="0.6"/><rect x="17" y="89" width="1" height="1" fill="#f8f8f2" fill-opacity="0.22"/><rect x="19" y="88" width="9" height="1" fill="#f8f8f2" fill-opacity="0.6"/><rect x="19" y="89" width="9" height="1" fill="#f8f8f2" fill-opacity="0.22"/><rect x="8" y="90" width="5" height="1" fill="#a6e22e" fill-opacity="0.6"/><rect x="8" y="91" width="5" height="1" fill="#a6e22e" fill-opacity="0.22"/><rect x="13" y="90" width="1" height="1" fill="#f8f8f2" fill-opacity="0.6"/><rect x="13" y="91" width="1" height="1" fill="#f8f8f2" fill-opacity="0.22"/><rect x="15" y="90" width="6" height="1" fill="#f8f8f2" fill-opacity="0.6"/><rect x="15" y="91" width="6" height="1" fill="#f8f8f2" fill-opacity="0.22"/><rect x="8" y="92" width="4" height="1" fill="#a6e22e" fill-opacity="0.6"/><rect x="8" y="93" width="4" height="1" fill="#a6e22e" fill-opacity="0.22"/><rect x="12" y="92" width="1" height="1" fill="#f8f8f2" fill-opacity="0.6"/><rect x="12" y="93" width="1" height="1" fill="#f8f8f2" fill-opacity="0.22"/><rect x="14" y="92" width="4" height="1" fill="#f8f8f2" fill-opacity="0.6"/><rect x="14" y="93" width="4" height="1" fill="#f8f8f2" fill-opacity="0.22"/><rect x="4" y="94" width="1" height="1" fill="#f8f8f2" fill-opacity="0.6"/><rect x="4" y="95" width="1" height="1" fill="#f8f8f2" fill-opacity="0.22"/><rect x="0" y="96" width="1" height="1" fill="#f8f8f2" fill-opacity="0.6"/><rect x="0" y="97" width="1" height="1" fill="#f8f8f2" fill-opacity="0.22"/><rect x="0" y="98" width="2" height="1" fill="#f8f8f2" fill-opacity="0.6"/><rect x="0" y="99" width="2" height="1" fill="#f8f8f2" fill-opacity="0.22"/><rect x="2" y="98" width="6" height="1" fill="#f92672" fill-opacity="0.6"/><rect x="2" y="99" width="6" height="1" fill="#f92672" fill-opacity="0.22"/><rect x="8" y="98" width="1" height="1" fill="#f8f8f2" fill-opacity="0.6"/><rect x="8" y="99" width="1" height="1" fill="#f8f8f2" fill-opacity="0.22"/><rect x="0" y="102" width="1" height="1" fill="#f8f8f2" fill-opacity="0.6"/><rect x="0" y="103" width="1" height="1" fill="#f8f8f2" fill-opacity="0.22"/><rect x="1" y="102" width="5" height="1" fill="#f92672" fill-opacity="0.6"/><rect x="1" y="103" width="5" height="1" fill="#f92672" fill-opacity="0.22"/><rect x="6" y="102" width="1" height="1" fill="#f8f8f2" fill-opacity="0.6"/><rect x="6" y="103" width="1" height="1" fill="#f8f8f2" fill-opacity="0.22"/><rect x="4" y="104" width="4" height="1" fill="#a6e22e" fill-opacity="0.6"/><rect x="4" y="105" width="4" height="1" fill="#a6e22e" fill-opacity="0.22"/><rect x="9" y="104" width="1" height="1" fill="#f8f8f2" fill-opacity="0.6"/><rect x="9" y="105" width="1" height="1" fill="#f8f8f2" fill-opacity="0.22"/><rect x="8" y="106" width="11" height="1" fill="#66d9ef" fill-opacity="0.6"/><rect x="8" y="107" width="11" height="1" fill="#66d9ef" fill-opacity="0.22"/><rect x="19" y="106" width="1" height="1" fill="#f8f8f2" fill-opacity="0.6"/><rect x="19" y="107" width="1" height="1" fill="#f8f8f2" fill-opacity="0.22"/><rect x="21" y="106" width="7" height="1" fill="#66d9ef" fill-opacity="0.6"/><rect x="21" y="107" width="7" height="1" fill="#66d9ef" fill-opacity="0.22"/><rect x="29" y="106" width="10" height="1" fill="#66d9ef" fill-opacity="0.6"/><rect x="29" y="107" width="10" height="1" fill="#66d9ef" fill-opacity="0.22"/><rect x="40" y="106" width="6" height="1" fill="#66d9ef" fill-opacity="0.6"/><rect x="40" y="107" width="6" height="1" fill="#66d9ef" fill-opacity="0.22"/><rect x="47" y="106" width="10" height="1" fill="#66d9ef" fill-opacity="0.6"/><rect x="47" y="107" width="10" height="1" fill="#66d9ef" fill-opacity="0.22"/><rect x="57" y="106" width="1" height="1" fill="#f8f8f2" fill-opacity="0.6"/><rect x="57" y="107" width="1" height="1" fill="#f8f8f2" fill-opacity="0.22"/><rect x="8" y="108" width="22" height="1" fill="#66d9ef" fill-opacity="0.6"/><rect x="8" y="109" width="22" height="1" fill="#66d9ef" fill-opacity="0.22"/><rect x="30" y="108" width="1" height="1" fill="#f8f8f2" fill-opacity="0.6"/><rect x="30" y="109" width="1" height="1" fill="#f8f8f2" fill-opacity="0.22"/><rect x="32" y="108" width="11" height="1" fill="#66d9ef" fill-opacity="0.6"/><rect x="32" y="109" width="11" height="1" fill="#66d9ef" fill-opacity="0.22"/><rect x="43" y="108" width="1" height="1" fill="#f8f8f2" fill-opacity="0.6"/><rect x="43" y="109" width="1" height="1" fill="#f8f8f2" fill-opacity="0.22"/><rect x="8" y="110" width="10" height="1" fill="#66d9ef" fill-opacity="0.6"/><rect x="8" y="111" width="10" height="1" fill="#66d9ef" fill-opacity="0.22"/><rect x="18" y="110" width="1" height="1" fill="#f8f8f2" fill-opacity="0.6"/><rect x="18" y="111" width="1" height="1" fill="#f8f8f2" fill-opacity="0.22"/><rect x="20" y="110" width="6" height="1" fill="#66d9ef" fill-opacity="0.6"/><rect x="20" y="111" width="6" height="1" fill="#66d9ef" fill-opacity="0.22"/><rect x="26" y="110" width="1" height="1" fill="#f8f8f2" fill-opacity="0.6"/><rect x="26" y="111" width="1" height="1" fill="#f8f8f2" fill-opacity="0.22"/><rect x="8" y="112" width="5" height="1" fill="#66d9ef" fill-opacity="0.6"/><rect x="8" y="113" width="5" height="1" fill="#66d9ef" fill-opacity="0.22"/><rect x="13" y="112" width="1" height="1" fill="#f8f8f2" fill-opacity="0.6"/><rect x="13" y="113" width="1" height="1" fill="#f8f8f2" fill-opacity="0.22"/><rect x="15" y="112" width="7" height="1" fill="#ae81ff" fill-opacity="0.6"/><rect x="15" y="113" width="7" height="1" fill="#ae81ff" fill-opacity="0.22"/><rect x="22" y="112" width="1" height="1" fill="#f8f8f2" fill-opacity="0.6"/><rect x="22" y="113" width="1" height="1" fill="#f8f8f2" fill-opacity="0.22"/><rect x="4" y="114" width="1" height="1" fill="#f8f8f2" fill-opacity="0.6"/><rect x="4" y="115" width="1" height="1" fill="#f8f8f2" fill-opacity="0.22"/><rect x="4" y="118" width="4" height="1" fill="#f92672" fill-opacity="0.6"/><rect x="4" y="119" width="4" height="1" fill="#f92672" fill-opacity="0.22"/><rect x="9" y="118" width="1" height="1" fill="#f8f8f2" fill-opacity="0.6"/><rect x="9" y="119" width="1" height="1" fill="#f8f8f2" fill-opacity="0.22"/><rect x="8" y="120" width="6" height="1" fill="#66d9ef" fill-opacity="0.6"/><rect x="8" y="121" width="6" height="1" fill="#66d9ef" fill-opacity="0.22"/><rect x="14" y="120" width="1" height="1" fill="#f8f8f2" fill-opacity="0.6"/><rect x="14" y="121" width="1" height="1" fill="#f8f8f2" fill-opacity="0.22"/><rect x="16" y="120" width="1" height="1" fill="#ae81ff" fill-opacity="0.6"/><rect x="16" y="121" width="1" height="1" fill="#ae81ff" fill-opacity="0.22"/><rect x="17" y="120" width="1" height="1" fill="#f8f8f2" fill-opacity="0.6"/><rect x="17" y="121" width="1" height="1" fill="#f8f8f2" fill-opacity="0.22"/><rect x="8" y="122" width="7" height="1" fill="#66d9ef" fill-opacity="0.6"/><rect x="8" y="123" width="7" height="1" fill="#66d9ef" fill-opacity="0.22"/><rect x="15" y="122" width="1" height="1" fill="#f8f8f2" fill-opacity="0.6"/><rect x="15" y="123" width="1" height="1" fill="#f8f8f2" fill-opacity="0.22"/><rect x="17" y="122" width="1" height="1" fill="#ae81ff" fill-opacity="0.6"/><rect x="17" y="123" width="1" height="1" fill="#ae81ff" fill-opacity="0.22"/><rect x="18" y="122" width="1" height="1" fill="#f8f8f2" fill-opacity="0.6"/><rect x="18" y="123" width="1" height="1" fill="#f8f8f2" fill-opacity="0.22"/><rect x="4" y="124" width="1" height="1" fill="#f8f8f2" fill-opacity="0.6"/><rect x="4" y="125" width="1" height="1" fill="#f8f8f2" fill-opacity="0.22"/><rect x="4" y="128" width="2" height="1" fill="#f92672" fill-opacity="0.6"/><rect x="4" y="129" width="2" height="1" fill="#f92672" fill-opacity="0.22"/><rect x="7" y="128" width="1" height="1" fill="#f8f8f2" fill-opacity="0.6"/><rect x="7" y="129" width="1" height="1" fill="#f8f8f2" fill-opacity="0.22"/><rect x="8" y="130" width="10" height="1" fill="#66d9ef" fill-opacity="0.6"/><rect x="8" y="131" width="10" height="1" fill="#66d9ef" fill-opacity="0.22"/><rect x="18" y="130" width="1" height="1" fill="#f8f8f2" fill-opacity="0.6"/><rect x="18" y="131" width="1" height="1" fill="#f8f8f2" fill-opacity="0.22"/><rect x="20" y="130" width="3" height="1" fill="#66d9ef" fill-opacity="0.6"/><rect x="20" y="131" width="3" height="1" fill="#66d9ef" fill-opacity="0.22"/><rect x="23" y="130" width="1" height="1" fill="#f8f8f2" fill-opacity="0.6"/><rect x="23" y="131" width="1" height="1" fill="#f8f8f2" fill-opacity="0.22"/><rect x="4" y="132" width="1" height="1" fill="#f8f8f2" fill-opacity="0.6"/><rect x="4" y="133" width="1" height="1" fill="#f8f8f2" fill-opacity="0.22"/><rect x="4" y="136" width="3" height="1" fill="#f92672" fill-opacity="0.6"/><rect x="4" y="137" width="3" height="1" fill="#f92672" fill-opacity="0.22"/><rect x="8" y="136" width="1" height="1" fill="#f8f8f2" fill-opacity="0.6"/><rect x="8" y="137" width="1" height="1" fill="#f8f8f2" fill-opacity="0.22"/><rect x="8" y="138" width="10" height="1" fill="#66d9ef" fill-opacity="0.6"/><rect x="8" y="139" width="10" height="1" fill="#66d9ef" fill-opacity="0.22"/><rect x="18" y="138" width="1" height="1" fill="#f8f8f2" fill-opacity="0.6"/><rect x="18" y="139" width="1" height="1" fill="#f8f8f2" fill-opacity="0.22"/><rect x="20" y="138" width="10" height="1" fill="#66d9ef" fill-opacity="0.6"/><rect x="20" y="139" width="10" height="1" fill="#66d9ef" fill-opacity="0.22"/><rect x="30" y="138" width="1" height="1" fill="#f8f8f2" fill-opacity="0.6"/><rect x="30" y="139" width="1" height="1" fill="#f8f8f2" fill-opacity="0.22"/><rect x="4" y="140" width="1" height="1" fill="#f8f8f2" fill-opacity="0.6"/><rect x="4" y="141" width="1" height="1" fill="#f8f8f2" fill-opacity="0.22"/><rect x="4" y="144" width="3" height="1" fill="#f92672" fill-opacity="0.6"/><rect x="4" y="145" width="3" height="1" fill="#f92672" fill-opacity="0.22"/><rect x="8" y="144" width="1" height="1" fill="#f8f8f2" fill-opacity="0.6"/><rect x="8" y="145" width="1" height="1" fill="#f8f8f2" fill-opacity="0.22"/><rect x="8" y="146" width="5" height="1" fill="#66d9ef" fill-opacity="0.6"/><rect x="8" y="147" width="5" height="1" fill="#66d9ef" fill-opacity="0.22"/><rect x="13" y="146" width="1" height="1" fill="#f8f8f2" fill-opacity="0.6"/><rect x="13" y="147" width="1" height="1" fill="#f8f8f2" fill-opacity="0.22"/><rect x="15" y="146" width="3" height="1" fill="#ae81ff" fill-opacity="0.6"/><rect x="15" y="147" width="3" height="1" fill="#ae81ff" fill-opacity="0.22"/><rect x="18" y="146" width="1" height="1" fill="#f92672" fill-opacity="0.6"/><rect x="18" y="147" width="1" height="1" fill="#f92672" fill-opacity="0.22"/><rect x="19" y="146" width="1" height="1" fill="#f8f8f2" fill-opacity="0.6"/><rect x="19" y="147" width="1" height="1" fill="#f8f8f2" fill-opacity="0.22"/><rect x="4" y="148" width="1" height="1" fill="#f8f8f2" fill-opacity="0.6"/><rect x="4" y="149" width="1" height="1" fill="#f8f8f2" fill-opacity="0.22"/><rect x="4" y="152" width="5" height="1" fill="#a6e22e" fill-opacity="0.6"/><rect x="4" y="153" width="5" height="1" fill="#a6e22e" fill-opacity="0.22"/><rect x="10" y="152" width="1" height="1" fill="#f92672" fill-opacity="0.6"/><rect x="10" y="153" width="1" height="1" fill="#f92672" fill-opacity="0.22"/><rect x="12" y="152" width="1" height="1" fill="#f8f8f2" fill-opacity="0.6"/><rect x="12" y="153" width="1" height="1" fill="#f8f8f2" fill-opacity="0.22"/><rect x="8" y="154" width="5" height="1" fill="#66d9ef" fill-opacity="0.6"/><rect x="8" y="155" width="5" height="1" fill="#66d9ef" fill-opacity="0.22"/><rect x="13" y="154" width="1" height="1" fill="#f8f8f2" fill-opacity="0.6"/><rect x="13" y="155" width="1" height="1" fill="#f8f8f2" fill-opacity="0.22"/><rect x="15" y="154" width="5" height="1" fill="#66d9ef" fill-opacity="0.6"/><rect x="15" y="155" width="5" height="1" fill="#66d9ef" fill-opacity="0.22"/><rect x="20" y="154" width="1" height="1" fill="#f8f8f2" fill-opacity="0.6"/><rect x="20" y="155" width="1" height="1" fill="#f8f8f2" fill-opacity="0.22"/><rect x="8" y="156" width="7" height="1" fill="#66d9ef" fill-opacity="0.6"/><rect x="8" y="157" width="7" height="1" fill="#66d9ef" fill-opacity="0.22"/><rect x="15" y="156" width="1" height="1" fill="#f8f8f2" fill-opacity="0.6"/><rect x="15" y="157" width="1" height="1" fill="#f8f8f2" fill-opacity="0.22"/><rect x="17" y="156" width="2" height="1" fill="#ae81ff" fill-opacity="0.6"/><rect x="17" y="157" width="2" height="1" fill="#ae81ff" fill-opacity="0.22"/><rect x="19" y="156" width="2" height="1" fill="#f92672" fill-opacity="0.6"/><rect x="19" y="157" width="2" height="1" fill="#f92672" fill-opacity="0.22"/><rect x="21" y="156" width="1" height="1" fill="#f8f8f2" fill-opacity="0.6"/><rect x="21" y="157" width="1" height="1" fill="#f8f8f2" fill-opacity="0.22"/><rect x="8" y="158" width="15" height="1" fill="#66d9ef" fill-opacity="0.6"/><rect x="8" y="159" width="15" height="1" fill="#66d9ef" fill-opacity="0.22"/><rect x="23" y="158" width="1" height="1" fill="#f8f8f2" fill-opacity="0.6"/><rect x="23" y="159" width="1" height="1" fill="#f8f8f2" fill-opacity="0.22"/><rect x="25" y="158" width="4" height="1" fill="#66d9ef" fill-opacity="0.6"/><rect x="25" y="159" width="4" height="1" fill="#66d9ef" fill-opacity="0.22"/><rect x="29" y="158" width="1" height="1" fill="#f8f8f2" fill-opacity="0.6"/><rect x="29" y="159" width="1" height="1" fill="#f8f8f2" fill-opacity="0.22"/><rect x="8" y="160" width="6" height="1" fill="#66d9ef" fill-opacity="0.6"/><rect x="8" y="161" width="6" height="1" fill="#66d9ef" fill-opacity="0.22"/><rect x="14" y="160" width="1" height="1" fill="#f8f8f2" fill-opacity="0.6"/><rect x="14" y="161" width="1" height="1" fill="#f8f8f2" fill-opacity="0.22"/><rect x="16" y="160" width="1" height="1" fill="#ae81ff" fill-opacity="0.6"/><rect x="16" y="161" width="1" height="1" fill="#ae81ff" fill-opacity="0.22"/><rect x="17" y="160" width="2" height="1" fill="#f92672" fill-opacity="0.6"/><rect x="17" y="161" width="2" height="1" fill="#f92672" fill-opacity="0.22"/><rect x="20" y="160" width="1" height="1" fill="#ae81ff" fill-opacity="0.6"/><rect x="20" y="161" width="1" height="1" fill="#ae81ff" fill-opacity="0.22"/><rect x="21" y="160" width="1" height="1" fill="#f8f8f2" fill-opacity="0.6"/><rect x="21" y="161" width="1" height="1" fill="#f8f8f2" fill-opacity="0.22"/><rect x="8" y="162" width="7" height="1" fill="#66d9ef" fill-opacity="0.6"/><rect x="8" y="163" width="7" height="1" fill="#66d9ef" fill-opacity="0.22"/><rect x="15" y="162" width="1" height="1" fill="#f8f8f2" fill-opacity="0.6"/><rect x="15" y="163" width="1" height="1" fill="#f8f8f2" fill-opacity="0.22"/><rect x="17" y="162" width="12" height="1" fill="#66d9ef" fill-opacity="0.6"/><rect x="17" y="163" width="12" height="1" fill="#66d9ef" fill-opacity="0.22"/><rect x="29" y="162" width="1" height="1" fill="#f8f8f2" fill-opacity="0.6"/><rect x="29" y="163" width="1" height="1" fill="#f8f8f2" fill-opacity="0.22"/><rect x="4" y="164" width="1" height="1" fill="#f8f8f2" fill-opacity="0.6"/><rect x="4" y="165" width="1" height="1" fill="#f8f8f2" fill-opacity="0.22"/><rect x="4" y="166" width="9" height="1" fill="#a6e22e" fill-opacity="0.6"/><rect x="4" y="167" width="9" height="1" fill="#a6e22e" fill-opacity="0.22"/><rect x="14" y="166" width="1" height="1" fill="#f8f8f2" fill-opacity="0.6"/><rect x="14" y="167" width="1" height="1" fill="#f8f8f2" fill-opacity="0.22"/><rect x="8" y="168" width="5" height="1" fill="#66d9ef" fill-opacity="0.6"/><rect x="8" y="169" width="5" height="1" fill="#66d9ef" fill-opacity="0.22"/><rect x="13" y="168" width="1" height="1" fill="#f8f8f2" fill-opacity="0.6"/><rect x="13" y="169" width="1" height="1" fill="#f8f8f2" fill-opacity="0.22"/><rect x="15" y="168" width="3" height="1" fill="#ae81ff" fill-opacity="0.6"/><rect x="15" y="169" width="3" height="1" fill="#ae81ff" fill-opacity="0.22"/><rect x="18" y="168" width="1" height="1" fill="#f92672" fill-opacity="0.6"/><rect x="18" y="169" width="1" height="1" fill="#f92672" fill-opacity="0.22"/><rect x="19" y="168" width="1" height="1" fill="#f8f8f2" fill-opacity="0.6"/><rect x="19" y="169" width="1" height="1" fill="#f8f8f2" fill-opacity="0.22"/><rect x="8" y="170" width="6" height="1" fill="#66d9ef" fill-opacity="0.6"/><rect x="8" y="171" width="6" height="1" fill="#66d9ef" fill-opacity="0.22"/><rect x="14" y="170" width="1" height="1" fill="#f8f8f2" fill-opacity="0.6"/><rect x="14" y="171" width="1" height="1" fill="#f8f8f2" fill-opacity="0.22"/><rect x="16" y="170" width="3" height="1" fill="#ae81ff" fill-opacity="0.6"/><rect x="16" y="171" width="3" height="1" fill="#ae81ff" fill-opacity="0.22"/><rect x="19" y="170" width="1" height="1" fill="#f92672" fill-opacity="0.6"/><rect x="19" y="171" width="1" height="1" fill="#f92672" fill-opacity="0.22"/><rect x="20" y="170" width="1" height="1" fill="#f8f8f2" fill-opacity="0.6"/><rect x="20" y="171" width="1" height="1" fill="#f8f8f2" fill-opacity="0.22"/><rect x="8" y="172" width="10" height="1" fill="#66d9ef" fill-opacity="0.6"/><rect x="8" y="173" width="10" height="1" fill="#66d9ef" fill-opacity="0.22"/><rect x="18" y="172" width="1" height="1" fill="#f8f8f2" fill-opacity="0.6"/><rect x="18" y="173" width="1" height="1" fill="#f8f8f2" fill-opacity="0.22"/><rect x="20" y="172" width="5" height="1" fill="#66d9ef" fill-opacity="0.6"/><rect x="20" y="173" width="5" height="1" fill="#66d9ef" fill-opacity="0.22"/><rect x="25" y="172" width="1" height="1" fill="#ae81ff" fill-opacity="0.6"/><rect x="25" y="173" width="1" height="1" fill="#ae81ff" fill-opacity="0.22"/><rect x="26" y="172" width="1" height="1" fill="#f8f8f2" fill-opacity="0.6"/><rect x="26" y="173" width="1" height="1" fill="#f8f8f2" fill-opacity="0.22"/><rect x="28" y="172" width="1" height="1" fill="#ae81ff" fill-opacity="0.6"/><rect x="28" y="173" width="1" height="1" fill="#ae81ff" fill-opacity="0.22"/><rect x="29" y="172" width="1" height="1" fill="#f8f8f2" fill-opacity="0.6"/><rect x="29" y="173" width="1" height="1" fill="#f8f8f2" fill-opacity="0.22"/><rect x="31" y="172" width="1" height="1" fill="#ae81ff" fill-opacity="0.6"/><rect x="31" y="173" width="1" height="1" fill="#ae81ff" fill-opacity="0.22"/><rect x="32" y="172" width="1" height="1" fill="#f8f8f2" fill-opacity="0.6"/><rect x="32" y="173" width="1" height="1" fill="#f8f8f2" fill-opacity="0.22"/><rect x="34" y="172" width="3" height="1" fill="#ae81ff" fill-opacity="0.6"/><rect x="34" y="173" width="3" height="1" fill="#ae81ff" fill-opacity="0.22"/><rect x="37" y="172" width="2" height="1" fill="#f8f8f2" fill-opacity="0.6"/><rect x="37" y="173" width="2" height="1" fill="#f8f8f2" fill-opacity="0.22"/><rect x="8" y="174" width="8" height="1" fill="#66d9ef" fill-opacity="0.6"/><rect x="8" y="175" width="8" height="1" fill="#66d9ef" fill-opacity="0.22"/><rect x="16" y="174" width="1" height="1" fill="#f8f8f2" fill-opacity="0.6"/><rect x="16" y="175" width="1" height="1" fill="#f8f8f2" fill-opacity="0.22"/><rect x="18" y="174" width="5" height="1" fill="#66d9ef" fill-opacity="0.6"/><rect x="18" y="175" width="5" height="1" fill="#66d9ef" fill-opacity="0.22"/><rect x="23" y="174" width="1" height="1" fill="#f8f8f2" fill-opacity="0.6"/><rect x="23" y="175" width="1" height="1" fill="#f8f8f2" fill-opacity="0.22"/><rect x="8" y="176" width="7" height="1" fill="#66d9ef" fill-opacity="0.6"/><rect x="8" y="177" width="7" height="1" fill="#66d9ef" fill-opacity="0.22"/><rect x="15" y="176" width="1" height="1" fill="#f8f8f2" fill-opacity="0.6"/><rect x="15" y="177" width="1" height="1" fill="#f8f8f2" fill-opacity="0.22"/><rect x="17" y="176" width="2" height="1" fill="#ae81ff" fill-opacity="0.6"/><rect x="17" y="177" width="2" height="1" fill="#ae81ff" fill-opacity="0.22"/><rect x="19" y="176" width="2" height="1" fill="#f92672" fill-opacity="0.6"/><rect x="19" y="177" width="2" height="1" fill="#f92672" fill-opacity="0.22"/><rect x="21" y="176" width="1" height="1" fill="#f8f8f2" fill-opacity="0.6"/><rect x="21" y="177" width="1" height="1" fill="#f8f8f2" fill-opacity="0.22"/><rect x="8" y="178" width="3" height="1" fill="#66d9ef" fill-opacity="0.6"/><rect x="8" y="179" width="3" height="1" fill="#66d9ef" fill-opacity="0.22"/><rect x="11" y="178" width="1" height="1" fill="#f8f8f2" fill-opacity="0.6"/><rect x="11" y="179" width="1" height="1" fill="#f8f8f2" fill-opacity="0.22"/><rect x="13" y="178" width="1" height="1" fill="#ae81ff" fill-opacity="0.6"/><rect x="13" y="179" width="1" height="1" fill="#ae81ff" fill-opacity="0.22"/><rect x="14" y="178" width="1" height="1" fill="#f8f8f2" fill-opacity="0.6"/><rect x="14" y="179" width="1" height="1" fill="#f8f8f2" fill-opacity="0.22"/><rect x="8" y="180" width="4" height="1" fill="#66d9ef" fill-opacity="0.6"/><rect x="8" y="181" width="4" height="1" fill="#66d9ef" fill-opacity="0.22"/><rect x="12" y="180" width="1" height="1" fill="#f8f8f2" fill-opacity="0.6"/><rect x="12" y="181" width="1" height="1" fill="#f8f8f2" fill-opacity="0.22"/><rect x="14" y="180" width="1" height="1" fill="#ae81ff" fill-opacity="0.6"/><rect x="14" y="181" width="1" height="1" fill="#ae81ff" fill-opacity="0.22"/><rect x="15" y="180" width="1" height="1" fill="#f8f8f2" fill-opacity="0.6"/><rect x="15" y="181" width="1" height="1" fill="#f8f8f2" fill-opacity="0.22"/><rect x="4" y="182" width="1" height="1" fill="#f8f8f2" fill-opacity="0.6"/><rect x="4" y="183" width="1" height="1" fill="#f8f8f2" fill-opacity="0.22"/><rect x="4" y="184" width="9" height="1" fill="#a6e22e" fill-opacity="0.6"/><rect x="4" y="185" width="9" height="1" fill="#a6e22e" fill-opacity="0.22"/><rect x="14" y="184" width="1" height="1" fill="#f8f8f2" fill-opacity="0.6"/><rect x="14" y="185" width="1" height="1" fill="#f8f8f2" fill-opacity="0.22"/><rect x="8" y="186" width="5" height="1" fill="#66d9ef" fill-opacity="0.6"/><rect x="8" y="187" width="5" height="1" fill="#66d9ef" fill-opacity="0.22"/><rect x="13" y="186" width="1" height="1" fill="#f8f8f2" fill-opacity="0.6"/><rect x="13" y="187" width="1" height="1" fill="#f8f8f2" fill-opacity="0.22"/><rect x="15" y="186" width="3" height="1" fill="#ae81ff" fill-opacity="0.6"/><rect x="15" y="187" width="3" height="1" fill="#ae81ff" fill-opacity="0.22"/><rect x="18" y="186" width="1" height="1" fill="#f92672" fill-opacity="0.6"/><rect x="18" y="187" width="1" height="1" fill="#f92672" fill-opacity="0.22"/><rect x="19" y="186" width="1" height="1" fill="#f8f8f2" fill-opacity="0.6"/><rect x="19" y="187" width="1" height="1" fill="#f8f8f2" fill-opacity="0.22"/><rect x="8" y="188" width="16" height="1" fill="#66d9ef" fill-opacity="0.6"/><rect x="8" y="189" width="16" height="1" fill="#66d9ef" fill-opacity="0.22"/><rect x="24" y="188" width="1" height="1" fill="#f8f8f2" fill-opacity="0.6"/><rect x="24" y="189" width="1" height="1" fill="#f8f8f2" fill-opacity="0.22"/><rect x="26" y="188" width="5" height="1" fill="#66d9ef" fill-opacity="0.6"/><rect x="26" y="189" width="5" height="1" fill="#66d9ef" fill-opacity="0.22"/><rect x="31" y="188" width="1" height="1" fill="#f8f8f2" fill-opacity="0.6"/><rect x="31" y="189" width="1" height="1" fill="#f8f8f2" fill-opacity="0.22"/><rect x="8" y="190" width="13" height="1" fill="#66d9ef" fill-opacity="0.6"/><rect x="8" y="191" width="13" height="1" fill="#66d9ef" fill-opacity="0.22"/><rect x="21" y="190" width="1" height="1" fill="#f8f8f2" fill-opacity="0.6"/><rect x="21" y="191" width="1" height="1" fill="#f8f8f2" fill-opacity="0.22"/><rect x="23" y="190" width="1" height="1" fill="#ae81ff" fill-opacity="0.6"/><rect x="23" y="191" width="1" height="1" fill="#ae81ff" fill-opacity="0.22"/><rect x="24" y="190" width="2" height="1" fill="#f92672" fill-opacity="0.6"/><rect x="24" y="191" width="2" height="1" fill="#f92672" fill-opacity="0.22"/><rect x="26" y="190" width="1" height="1" fill="#f8f8f2" fill-opacity="0.6"/><rect x="26" y="191" width="1" height="1" fill="#f8f8f2" fill-opacity="0.22"/><rect x="8" y="192" width="7" height="1" fill="#66d9ef" fill-opacity="0.6"/><rect x="8" y="193" width="7" height="1" fill="#66d9ef" fill-opacity="0.22"/><rect x="15" y="192" width="1" height="1" fill="#f8f8f2" fill-opacity="0.6"/><rect x="15" y="193" width="1" height="1" fill="#f8f8f2" fill-opacity="0.22"/><rect x="17" y="192" width="2" height="1" fill="#ae81ff" fill-opacity="0.6"/><rect x="17" y="193" width="2" height="1" fill="#ae81ff" fill-opacity="0.22"/><rect x="19" y="192" width="2" height="1" fill="#f92672" fill-opacity="0.6"/><rect x="19" y="193" width="2" height="1" fill="#f92672" fill-opacity="0.22"/><rect x="21" y="192" width="1" height="1" fill="#f8f8f2" fill-opacity="0.6"/><rect x="21" y="193" width="1" height="1" fill="#f8f8f2" fill-opacity="0.22"/><rect x="8" y="194" width="6" height="1" fill="#66d9ef" fill-opacity="0.6"/><rect x="8" y="195" width="6" height="1" fill="#66d9ef" fill-opacity="0.22"/><rect x="14" y="194" width="1" height="1" fill="#f8f8f2" fill-opacity="0.6"/><rect x="14" y="195" width="1" height="1" fill="#f8f8f2" fill-opacity="0.22"/><rect x="16" y="194" width="4" height="1" fill="#66d9ef" fill-opacity="0.6"/><rect x="16" y="195" width="4" height="1" fill="#66d9ef" fill-opacity="0.22"/><rect x="20" y="194" width="1" height="1" fill="#f8f8f2" fill-opacity="0.6"/><rect x="20" y="195" width="1" height="1" fill="#f8f8f2" fill-opacity="0.22"/><rect x="4" y="196" width="1" height="1" fill="#f8f8f2" fill-opacity="0.6"/><rect x="4" y="197" width="1" height="1" fill="#f8f8f2" fill-opacity="0.22"/><rect x="4" y="198" width="9" height="1" fill="#a6e22e" fill-opacity="0.6"/><rect x="4" y="199" width="9" height="1" fill="#a6e22e" fill-opacity="0.22"/><rect x="14" y="198" width="1" height="1" fill="#f8f8f2" fill-opacity="0.6"/><rect x="14" y="199" width="1" height="1" fill="#f8f8f2" fill-opacity="0.22"/><rect x="8" y="200" width="5" height="1" fill="#66d9ef" fill-opacity="0.6"/><rect x="8" y="201" width="5" height="1" fill="#66d9ef" fill-opacity="0.22"/><rect x="13" y="200" width="1" height="1" fill="#f8f8f2" fill-opacity="0.6"/><rect x="13" y="201" width="1" height="1" fill="#f8f8f2" fill-opacity="0.22"/><rect x="15" y="200" width="3" height="1" fill="#ae81ff" fill-opacity="0.6"/><rect x="15" y="201" width="3" height="1" fill="#ae81ff" fill-opacity="0.22"/><rect x="18" y="200" width="1" height="1" fill="#f92672" fill-opacity="0.6"/><rect x="18" y="201" width="1" height="1" fill="#f92672" fill-opacity="0.22"/><rect x="19" y="200" width="1" height="1" fill="#f8f8f2" fill-opacity="0.6"/><rect x="19" y="201" width="1" height="1" fill="#f8f8f2" fill-opacity="0.22"/><rect x="8" y="202" width="16" height="1" fill="#66d9ef" fill-opacity="0.6"/><rect x="8" y="203" width="16" height="1" fill="#66d9ef" fill-opacity="0.22"/><rect x="24" y="202" width="1" height="1" fill="#f8f8f2" fill-opacity="0.6"/><rect x="24" y="203" width="1" height="1" fill="#f8f8f2" fill-opacity="0.22"/><rect x="26" y="202" width="4" height="1" fill="#ae81ff" fill-opacity="0.6"/><rect x="26" y="203" width="4" height="1" fill="#ae81ff" fill-opacity="0.22"/><rect x="30" y="202" width="1" height="1" fill="#f8f8f2" fill-opacity="0.6"/><rect x="30" y="203" width="1" height="1" fill="#f8f8f2" fill-opacity="0.22"/><rect x="8" y="204" width="7" height="1" fill="#66d9ef" fill-opacity="0.6"/><rect x="8" y="205" width="7" height="1" fill="#66d9ef" fill-opacity="0.22"/><rect x="15" y="204" width="1" height="1" fill="#f8f8f2" fill-opacity="0.6"/><rect x="15" y="205" width="1" height="1" fill="#f8f8f2" fill-opacity="0.22"/><rect x="17" y="204" width="2" height="1" fill="#ae81ff" fill-opacity="0.6"/><rect x="17" y="205" width="2" height="1" fill="#ae81ff" fill-opacity="0.22"/><rect x="19" y="204" width="2" height="1" fill="#f92672" fill-opacity="0.6"/><rect x="19" y="205" width="2" height="1" fill="#f92672" fill-opacity="0.22"/><rect x="21" y="204" width="1" height="1" fill="#f8f8f2" fill-opacity="0.6"/><rect x="21" y="205" width="1" height="1" fill="#f8f8f2" fill-opacity="0.22"/><rect x="8" y="206" width="6" height="1" fill="#66d9ef" fill-opacity="0.6"/><rect x="8" y="207" width="6" height="1" fill="#66d9ef" fill-opacity="0.22"/><rect x="14" y="206" width="1" height="1" fill="#f8f8f2" fill-opacity="0.6"/><rect x="14" y="207" width="1" height="1" fill="#f8f8f2" fill-opacity="0.22"/><rect x="16" y="206" width="4" height="1" fill="#66d9ef" fill-opacity="0.6"/><rect x="16" y="207" width="4" height="1" fill="#66d9ef" fill-opacity="0.22"/><rect x="20" y="206" width="1" height="1" fill="#f8f8f2" fill-opacity="0.6"/><rect x="20" y="207" width="1" height="1" fill="#f8f8f2" fill-opacity="0.22"/><rect x="8" y="208" width="9" height="1" fill="#66d9ef" fill-opacity="0.6"/><rect x="8" y="209" width="9" height="1" fill="#66d9ef" fill-opacity="0.22"/><rect x="17" y="208" width="1" height="1" fill="#f8f8f2" fill-opacity="0.6"/><rect x="17" y="209" width="1" height="1" fill="#f8f8f2" fill-opacity="0.22"/><rect x="19" y="208" width="2" height="1" fill="#ae81ff" fill-opacity="0.6"/><rect x="19" y="209" width="2" height="1" fill="#ae81ff" fill-opacity="0.22"/><rect x="21" y="208" width="2" height="1" fill="#f92672" fill-opacity="0.6"/><rect x="21" y="209" width="2" height="1" fill="#f92672" fill-opacity="0.22"/><rect x="24" y="208" width="1" height="1" fill="#ae81ff" fill-opacity="0.6"/><rect x="24" y="209" width="1" height="1" fill="#ae81ff" fill-opacity="0.22"/><rect x="25" y="208" width="1" height="1" fill="#f8f8f2" fill-opacity="0.6"/><rect x="25" y="209" width="1" height="1" fill="#f8f8f2" fill-opacity="0.22"/><rect x="8" y="210" width="5" height="1" fill="#66d9ef" fill-opacity="0.6"/><rect x="8" y="211" width="5" height="1" fill="#66d9ef" fill-opacity="0.22"/><rect x="13" y="210" width="1" height="1" fill="#f8f8f2" fill-opacity="0.6"/><rect x="13" y="211" width="1" height="1" fill="#f8f8f2" fill-opacity="0.22"/><rect x="15" y="210" width="5" height="1" fill="#66d9ef" fill-opacity="0.6"/><rect x="15" y="211" width="5" height="1" fill="#66d9ef" fill-opacity="0.22"/><rect x="20" y="210" width="1" height="1" fill="#f8f8f2" fill-opacity="0.6"/><rect x="20" y="211" width="1" height="1" fill="#f8f8f2" fill-opacity="0.22"/><rect x="4" y="212" width="1" height="1" fill="#f8f8f2" fill-opacity="0.6"/><rect x="4" y="213" width="1" height="1" fill="#f8f8f2" fill-opacity="0.22"/><rect x="0" y="214" width="2" height="1" fill="#f8f8f2" fill-opacity="0.6"/><rect x="0" y="215" width="2" height="1" fill="#f8f8f2" fill-opacity="0.22"/><rect x="2" y="214" width="5" height="1" fill="#f92672" fill-opacity="0.6"/><rect x="2" y="215" width="5" height="1" fill="#f92672" fill-opacity="0.22"/><rect x="7" y="214" width="1" height="1" fill="#f8f8f2" fill-opacity="0.6"/><rect x="7" y="215" width="1" height="1" fill="#f8f8f2" fill-opacity="0.22"/></svg>
<div class="abs" style="left:1102px;top:101px;width:22px;height:2px;background:#e0302f"></div>
<div class="abs" style="left:1082px;top:65px;width:3px;height:24px;background:#0c7d9d"></div><div class="abs" style="left:1082px;top:95px;width:3px;height:12px;background:#0c7d9d"></div><div class="abs" style="left:1082px;top:111px;width:3px;height:2px;background:#0c7d9d"></div><div class="abs" style="left:1082px;top:113px;width:3px;height:36px;background:#587c0c"></div><div class="abs" style="left:1082px;top:149px;width:3px;height:10px;background:#0c7d9d"></div><div class="abs" style="left:1082px;top:167px;width:3px;height:2px;background:#c0302f"></div><div class="abs" style="left:1082px;top:169px;width:3px;height:108px;background:#0c7d9d"></div>
<div class="abs" style="left:1183px;top:63px;width:14px;height:511px;background:#272822;border-left:1px solid #3b3c36"></div>
<div class="abs" style="left:1184px;top:90px;width:13px;height:100px;background:rgba(121,121,121,0.15)"></div>
<div class="abs" style="left:1184px;top:70px;width:4px;height:44px;background:#1b6f8f"></div><div class="abs" style="left:1184px;top:126px;width:4px;height:22px;background:#1b6f8f"></div><div class="abs" style="left:1184px;top:154px;width:4px;height:6px;background:#1b6f8f"></div><div class="abs" style="left:1184px;top:160px;width:4px;height:68px;background:#5f7f24"></div><div class="abs" style="left:1184px;top:228px;width:4px;height:19px;background:#1b6f8f"></div><div class="abs" style="left:1184px;top:251px;width:4px;height:6px;background:#7a3040"></div><div class="abs" style="left:1184px;top:257px;width:4px;height:213px;background:#1b6f8f"></div><div class="abs" style="left:1193px;top:99px;width:4px;height:13px;background:#3794ff"></div><div class="abs" style="left:1193px;top:129px;width:4px;height:6px;background:#3794ff"></div><div class="abs" style="left:1193px;top:137px;width:4px;height:5px;background:#e51400"></div><div class="abs" style="left:1184px;top:137px;width:13px;height:2px;background:#d0d0d0"></div>
<div class="abs" style="left:1197px;top:6px;width:1px;height:568px;background:#34352f"></div>
<div class="abs" style="left:1198px;top:6px;width:674px;height:35px;background:#1e1f1c"></div>
<div class="abs" style="left:1198px;top:6px;width:132px;height:35px;background:#272822"></div><svg class="abs" style="left:1209px;top:18px" width="13.8" height="12" viewBox="0 0 261.76 226.69"><path d="M161.096.001l-30.225 52.351L100.647.001H-.005l130.877 226.688L261.749.001z" fill="#41b883"/><path d="M161.096.001l-30.225 52.351L100.647.001H52.346l78.526 136.01L209.398.001z" fill="#35495e"/></svg><div class="tab ui" style="left:1230px;color:#73c991">Modal.vue<span style="margin-left:5px;font-size:11.5px;color:#73c991">U</span></div><svg class="abs" style="left:1310px;top:16px" width="16" height="16" viewBox="0 0 16 16"><path d="M3.5 3.5 L12.5 12.5 M12.5 3.5 L3.5 12.5" stroke="#8f8f8a" stroke-width="1.3"/></svg>
<div class="abs" style="left:1331px;top:6px;width:121px;height:35px;background:#34352f"></div><svg class="abs" style="left:1342px;top:18px" width="13.8" height="12" viewBox="0 0 261.76 226.69"><path d="M161.096.001l-30.225 52.351L100.647.001H-.005l130.877 226.688L261.749.001z" fill="#41b883"/><path d="M161.096.001l-30.225 52.351L100.647.001H52.346l78.526 136.01L209.398.001z" fill="#35495e"/></svg><div class="tab ui" style="left:1363px;color:#73c991">card.vue<span style="margin-left:5px;font-size:11.5px;color:#73c991">U</span></div>
<div class="abs" style="left:1843px;top:24px;width:2px;height:2px;background:#c5c5c5"></div><div class="abs" style="left:1848px;top:24px;width:2px;height:2px;background:#c5c5c5"></div><div class="abs" style="left:1853px;top:24px;width:2px;height:2px;background:#c5c5c5"></div>
<div class="abs" style="left:1198px;top:41px;width:674px;height:22px;background:#272822"></div>
<div class="bc ui" style="left:1213px">src</div><svg class="abs" style="left:1230px;top:45px" width="16" height="16" viewBox="0 0 16 16"><path d="M6 3.5 L10.5 8 L6 12.5" fill="none" stroke="#c5c5bf" stroke-width="1.1"/></svg><div class="bc ui" style="left:1245px">components</div><svg class="abs" style="left:1315px;top:45px" width="16" height="16" viewBox="0 0 16 16"><path d="M6 3.5 L10.5 8 L6 12.5" fill="none" stroke="#c5c5bf" stroke-width="1.1"/></svg><svg class="abs" style="left:1334px;top:47px" width="13.8" height="12" viewBox="0 0 261.76 226.69"><path d="M161.096.001l-30.225 52.351L100.647.001H-.005l130.877 226.688L261.749.001z" fill="#41b883"/><path d="M161.096.001l-30.225 52.351L100.647.001H52.346l78.526 136.01L209.398.001z" fill="#35495e"/></svg><div class="bc ui" style="left:1355px">Modal.vue</div><svg class="abs" style="left:1413px;top:45px" width="16" height="16" viewBox="0 0 16 16"><path d="M6 3.5 L10.5 8 L6 12.5" fill="none" stroke="#c5c5bf" stroke-width="1.1"/></svg><div class="bc ui" style="left:1433px">{ }</div><div class="bc ui" style="left:1451px">"Modal.vue"</div><svg class="abs" style="left:1520px;top:45px" width="16" height="16" viewBox="0 0 16 16"><path d="M6 3.5 L10.5 8 L6 12.5" fill="none" stroke="#c5c5bf" stroke-width="1.1"/></svg><svg class="abs" style="left:1536px;top:45px" width="16" height="16" viewBox="0 0 16 16"><path d="M0.8 4.4 L8 1.4 L14.1 3.7 V9.1 L6.3 12.6 L0.8 10.2 Z M0.8 4.4 L6.3 7.4 L14.1 3.7 M6.3 7.4 V12.6" fill="none" stroke="#75beff" stroke-width="1.1" stroke-linejoin="round"/></svg><div class="bc ui" style="left:1554px">script</div><svg class="abs" style="left:1586px;top:45px" width="16" height="16" viewBox="0 0 16 16"><path d="M6 3.5 L10.5 8 L6 12.5" fill="none" stroke="#c5c5bf" stroke-width="1.1"/></svg><svg class="abs" style="left:1601px;top:45px" width="18" height="16" viewBox="0 0 18 16"><path d="M3.8 3.4 H1.6 V11.4 H3.8 M13.8 3.4 H16 V11.4 H13.8" fill="none" stroke="#75beff" stroke-width="1.2"/><path d="M5 5.8 L9.5 4 L12.8 5.5 V9 L8.3 11 L5 9.6Z" fill="#75beff"/><path d="M6.2 7.5 L8.3 8.4 L11.5 6.6 M7.8 5.9 L10 5.3" fill="none" stroke="#272822" stroke-width="0.8"/></svg><div class="bc ui" style="left:1622px">default</div><svg class="abs" style="left:1661px;top:45px" width="16" height="16" viewBox="0 0 16 16"><path d="M6 3.5 L10.5 8 L6 12.5" fill="none" stroke="#c5c5bf" stroke-width="1.1"/></svg><svg class="abs" style="left:1678px;top:45px" width="16" height="16" viewBox="0 0 16 16"><path d="M2.2 12.6 L7.4 7.4 A3.6 3.6 0 0 1 12.3 2.2 L10.2 4.3 L10.6 5.5 L11.8 5.9 L13.9 3.8 A3.6 3.6 0 0 1 8.7 8.7 L3.5 13.9 A0.92 0.92 0 0 1 2.2 12.6 Z" fill="none" stroke="#c5c5bf" stroke-width="1"/></svg><div class="bc ui" style="left:1696px">props</div>
<div class="abs" style="left:1198px;top:63px;width:674px;height:511px;background:#272822"></div>
<div class="abs" style="left:1265px;top:348px;width:516px;height:19px;background:#3e3d32"></div>
<div class="ln" style="left:1199px;top:63px;color:#90908a">1</div>
<div class="ln" style="left:1199px;top:82px;color:#90908a">2</div>
<div class="ln" style="left:1199px;top:101px;color:#90908a">3</div>
<div class="ln" style="left:1199px;top:120px;color:#90908a">4</div>
<div class="ln" style="left:1199px;top:139px;color:#90908a">5</div>
<div class="ln" style="left:1199px;top:158px;color:#90908a">6</div>
<div class="ln" style="left:1199px;top:177px;color:#90908a">7</div>
<div class="ln" style="left:1199px;top:196px;color:#90908a">8</div>
<div class="ln" style="left:1199px;top:215px;color:#90908a">9</div>
<div class="ln" style="left:1199px;top:234px;color:#90908a">10</div>
<div class="ln" style="left:1199px;top:253px;color:#90908a">11</div>
<div class="ln" style="left:1199px;top:272px;color:#90908a">12</div>
<div class="ln" style="left:1199px;top:291px;color:#90908a">13</div>
<div class="ln" style="left:1199px;top:310px;color:#90908a">14</div>
<div class="ln" style="left:1199px;top:329px;color:#90908a">15</div>
<div class="ln" style="left:1199px;top:348px;color:#c2c2bf">16</div>
<div class="ln" style="left:1199px;top:367px;color:#90908a">17</div>
<div class="ln" style="left:1199px;top:386px;color:#90908a">18</div>
<div class="ln" style="left:1199px;top:405px;color:#90908a">19</div>
<div class="ln" style="left:1199px;top:424px;color:#90908a">20</div>
<div class="ln" style="left:1199px;top:443px;color:#90908a">21</div>
<div class="ln" style="left:1199px;top:462px;color:#90908a">22</div>
<div class="ln" style="left:1199px;top:481px;color:#90908a">23</div>
<div class="ln" style="left:1199px;top:500px;color:#90908a">24</div>
<div class="ln" style="left:1199px;top:519px;color:#90908a">25</div>
<div class="ln" style="left:1199px;top:538px;color:#90908a">26</div>
<div class="guide" style="left:1265px;top:82px;height:152px;background:#464741"></div>
<div class="guide" style="left:1296px;top:101px;height:114px;background:#464741"></div>
<div class="guide" style="left:1327px;top:120px;height:76px;background:#464741"></div>
<div class="guide" style="left:1265px;top:310px;height:114px;background:#464741"></div>
<div class="guide" style="left:1296px;top:348px;height:57px;background:#464741"></div>

<div class="code" style="left:1265px;top:63px"><span class="p">&lt;</span><span class="t">template</span><span class="p">&gt;</span></div>
<svg class="abs" style="left:1265px;top:88px" width="9" height="8" viewBox="0 0 9 8"><path d="M0.5 4 H7.5 M4.5 1.3 L7.5 4 L4.5 6.7" fill="none" stroke="#585950" stroke-width="1"/></svg>
<div class="code" style="left:1265px;top:82px"><span class="p">    </span><span class="p">&lt;</span><span class="t">div</span><span class="p"><span class="ws">·</span></span><span class="a">class</span><span class="p">=</span><span class="s">"black-bg"</span><span class="p"><span class="ws">·</span></span><span class="a">v-if</span><span class="p">="modal_bool</span><span class="p"><span class="ws">·</span></span><span class="t">==</span><span class="p"><span class="ws">·</span></span><span class="n">true</span><span class="p">"&gt;</span></div>
<svg class="abs" style="left:1265px;top:107px" width="9" height="8" viewBox="0 0 9 8"><path d="M0.5 4 H7.5 M4.5 1.3 L7.5 4 L4.5 6.7" fill="none" stroke="#585950" stroke-width="1"/></svg><svg class="abs" style="left:1295.8px;top:107px" width="9" height="8" viewBox="0 0 9 8"><path d="M0.5 4 H7.5 M4.5 1.3 L7.5 4 L4.5 6.7" fill="none" stroke="#585950" stroke-width="1"/></svg>
<div class="code" style="left:1265px;top:101px"><span class="p">    </span><span class="p">    </span><span class="p">&lt;</span><span class="t">div</span><span class="p"><span class="ws">·</span></span><span class="a">class</span><span class="p">=</span><span class="s">"white-bg"</span><span class="p">&gt;</span></div>
<svg class="abs" style="left:1265px;top:126px" width="9" height="8" viewBox="0 0 9 8"><path d="M0.5 4 H7.5 M4.5 1.3 L7.5 4 L4.5 6.7" fill="none" stroke="#585950" stroke-width="1"/></svg><svg class="abs" style="left:1295.8px;top:126px" width="9" height="8" viewBox="0 0 9 8"><path d="M0.5 4 H7.5 M4.5 1.3 L7.5 4 L4.5 6.7" fill="none" stroke="#585950" stroke-width="1"/></svg><svg class="abs" style="left:1326.6px;top:126px" width="9" height="8" viewBox="0 0 9 8"><path d="M0.5 4 H7.5 M4.5 1.3 L7.5 4 L4.5 6.7" fill="none" stroke="#585950" stroke-width="1"/></svg>
<div class="code" style="left:1265px;top:120px"><span class="p">    </span><span class="p">    </span><span class="p">    </span><span class="p">&lt;</span><span class="t">h4</span><span class="p">&gt;</span><span class="p"><span class="ws">·</span></span><span class="p">{{</span><span class="p"><span class="ws">·</span></span><span class="p sq">oneroom</span><span class="p">_data[get_product_num].title</span><span class="p"><span class="ws">·</span></span><span class="p">}}</span><span class="p"><span class="ws">·</span></span><span class="p">&lt;/</span><span class="t">h4</span><span class="p">&gt;</span></div>
<svg class="abs" style="left:1265px;top:145px" width="9" height="8" viewBox="0 0 9 8"><path d="M0.5 4 H7.5 M4.5 1.3 L7.5 4 L4.5 6.7" fill="none" stroke="#585950" stroke-width="1"/></svg><svg class="abs" style="left:1295.8px;top:145px" width="9" height="8" viewBox="0 0 9 8"><path d="M0.5 4 H7.5 M4.5 1.3 L7.5 4 L4.5 6.7" fill="none" stroke="#585950" stroke-width="1"/></svg><svg class="abs" style="left:1326.6px;top:145px" width="9" height="8" viewBox="0 0 9 8"><path d="M0.5 4 H7.5 M4.5 1.3 L7.5 4 L4.5 6.7" fill="none" stroke="#585950" stroke-width="1"/></svg>
<div class="code" style="left:1265px;top:139px"><span class="p">    </span><span class="p">    </span><span class="p">    </span><span class="p">&lt;</span><span class="t">p</span><span class="p">&gt;{{</span><span class="p"><span class="ws">·</span></span><span class="p sq">oneroom</span><span class="p">_data[get_product_num].content</span><span class="p"><span class="ws">·</span></span><span class="p">}}&lt;/</span><span class="t">p</span><span class="p">&gt;</span></div>
<svg class="abs" style="left:1265px;top:164px" width="9" height="8" viewBox="0 0 9 8"><path d="M0.5 4 H7.5 M4.5 1.3 L7.5 4 L4.5 6.7" fill="none" stroke="#585950" stroke-width="1"/></svg><svg class="abs" style="left:1295.8px;top:164px" width="9" height="8" viewBox="0 0 9 8"><path d="M0.5 4 H7.5 M4.5 1.3 L7.5 4 L4.5 6.7" fill="none" stroke="#585950" stroke-width="1"/></svg><svg class="abs" style="left:1326.6px;top:164px" width="9" height="8" viewBox="0 0 9 8"><path d="M0.5 4 H7.5 M4.5 1.3 L7.5 4 L4.5 6.7" fill="none" stroke="#585950" stroke-width="1"/></svg>
<div class="code" style="left:1265px;top:158px"><span class="p">    </span><span class="p">    </span><span class="p">    </span><span class="p">&lt;</span><span class="t">p</span><span class="p">&gt;{{</span><span class="p"><span class="ws">·</span></span><span class="p sq">oneroom</span><span class="p">_data[get_product_num].price</span><span class="p"><span class="ws">·</span></span><span class="p">}}&lt;/</span><span class="t">p</span><span class="p">&gt;</span></div>
<svg class="abs" style="left:1265px;top:183px" width="9" height="8" viewBox="0 0 9 8"><path d="M0.5 4 H7.5 M4.5 1.3 L7.5 4 L4.5 6.7" fill="none" stroke="#585950" stroke-width="1"/></svg><svg class="abs" style="left:1295.8px;top:183px" width="9" height="8" viewBox="0 0 9 8"><path d="M0.5 4 H7.5 M4.5 1.3 L7.5 4 L4.5 6.7" fill="none" stroke="#585950" stroke-width="1"/></svg><svg class="abs" style="left:1326.6px;top:183px" width="9" height="8" viewBox="0 0 9 8"><path d="M0.5 4 H7.5 M4.5 1.3 L7.5 4 L4.5 6.7" fill="none" stroke="#585950" stroke-width="1"/></svg>
<div class="code" style="left:1265px;top:177px"><span class="p">    </span><span class="p">    </span><span class="p">    </span><span class="cm">&lt;!--<span class="ws">·</span>&lt;button<span class="ws">·</span>@click="modal_bool<span class="ws">·</span>=<span class="ws">·</span>false"&gt;<span class="hg">닫기</span>&lt;/button&gt;<span class="ws">·</span>--&gt;</span></div>
<svg class="abs" style="left:1265px;top:202px" width="9" height="8" viewBox="0 0 9 8"><path d="M0.5 4 H7.5 M4.5 1.3 L7.5 4 L4.5 6.7" fill="none" stroke="#585950" stroke-width="1"/></svg><svg class="abs" style="left:1295.8px;top:202px" width="9" height="8" viewBox="0 0 9 8"><path d="M0.5 4 H7.5 M4.5 1.3 L7.5 4 L4.5 6.7" fill="none" stroke="#585950" stroke-width="1"/></svg>
<div class="code" style="left:1265px;top:196px"><span class="p">    </span><span class="p">    </span><span class="p">&lt;/</span><span class="t">div</span><span class="p">&gt;</span></div>
<svg class="abs" style="left:1265px;top:221px" width="9" height="8" viewBox="0 0 9 8"><path d="M0.5 4 H7.5 M4.5 1.3 L7.5 4 L4.5 6.7" fill="none" stroke="#585950" stroke-width="1"/></svg>
<div class="code" style="left:1265px;top:215px"><span class="p">    </span><span class="p">&lt;/</span><span class="t">div</span><span class="p">&gt;</span></div>

<div class="code" style="left:1265px;top:234px"><span class="p">&lt;/</span><span class="t">template</span><span class="p">&gt;</span></div>

<div class="code" style="left:1265px;top:253px"></div>

<div class="code" style="left:1265px;top:272px"><span class="p">&lt;</span><span class="t">script</span><span class="p">&gt;</span></div>

<div class="code" style="left:1265px;top:291px"><span class="k">export</span><span class="p"><span class="ws">·</span></span><span class="k">default</span><span class="p"><span class="ws">·</span></span><span class="p">{</span></div>
<svg class="abs" style="left:1265px;top:316px" width="9" height="8" viewBox="0 0 9 8"><path d="M0.5 4 H7.5 M4.5 1.3 L7.5 4 L4.5 6.7" fill="none" stroke="#585950" stroke-width="1"/></svg>
<div class="code" style="left:1265px;top:310px"><span class="p">    </span><span class="p">name:</span><span class="p"><span class="ws">·</span></span><span class="s">'Modal'</span><span class="p">,</span></div>
<svg class="abs" style="left:1265px;top:335px" width="9" height="8" viewBox="0 0 9 8"><path d="M0.5 4 H7.5 M4.5 1.3 L7.5 4 L4.5 6.7" fill="none" stroke="#585950" stroke-width="1"/></svg>
<div class="code" style="left:1265px;top:329px"><span class="p">    </span><span class="p">props:</span><span class="p"><span class="ws">·</span></span><span class="p">{</span></div>
<svg class="abs" style="left:1265px;top:354px" width="9" height="8" viewBox="0 0 9 8"><path d="M0.5 4 H7.5 M4.5 1.3 L7.5 4 L4.5 6.7" fill="none" stroke="#585950" stroke-width="1"/></svg><svg class="abs" style="left:1295.8px;top:354px" width="9" height="8" viewBox="0 0 9 8"><path d="M0.5 4 H7.5 M4.5 1.3 L7.5 4 L4.5 6.7" fill="none" stroke="#585950" stroke-width="1"/></svg>
<div class="code" style="left:1265px;top:348px"><span class="p">    </span><span class="p">    </span><span class="a ul sq">oneroom</span><span class="a ul">_data</span><span class="p"><span class="ws">·</span></span><span class="p">:</span><span class="p"><span class="ws">·</span></span><span class="ty">Object</span><span class="p">,</span></div>
<svg class="abs" style="left:1265px;top:373px" width="9" height="8" viewBox="0 0 9 8"><path d="M0.5 4 H7.5 M4.5 1.3 L7.5 4 L4.5 6.7" fill="none" stroke="#585950" stroke-width="1"/></svg><svg class="abs" style="left:1295.8px;top:373px" width="9" height="8" viewBox="0 0 9 8"><path d="M0.5 4 H7.5 M4.5 1.3 L7.5 4 L4.5 6.7" fill="none" stroke="#585950" stroke-width="1"/></svg>
<div class="code" style="left:1265px;top:367px"><span class="p">    </span><span class="p">    </span><span class="a ul">modal_bool</span><span class="p"><span class="ws">·</span></span><span class="p">:</span><span class="p"><span class="ws">·</span></span><span class="ty">Boolean</span><span class="p">,</span></div>
<svg class="abs" style="left:1265px;top:392px" width="9" height="8" viewBox="0 0 9 8"><path d="M0.5 4 H7.5 M4.5 1.3 L7.5 4 L4.5 6.7" fill="none" stroke="#585950" stroke-width="1"/></svg><svg class="abs" style="left:1295.8px;top:392px" width="9" height="8" viewBox="0 0 9 8"><path d="M0.5 4 H7.5 M4.5 1.3 L7.5 4 L4.5 6.7" fill="none" stroke="#585950" stroke-width="1"/></svg>
<div class="code" style="left:1265px;top:386px"><span class="p">    </span><span class="p">    </span><span class="a ul">get_product_num</span><span class="p"><span class="ws">·</span></span><span class="p">:</span><span class="p"><span class="ws">·</span></span><span class="ty">Number</span></div>
<svg class="abs" style="left:1265px;top:411px" width="9" height="8" viewBox="0 0 9 8"><path d="M0.5 4 H7.5 M4.5 1.3 L7.5 4 L4.5 6.7" fill="none" stroke="#585950" stroke-width="1"/></svg>
<div class="code" style="left:1265px;top:405px"><span class="p">    </span><span class="p">}</span></div>

<div class="code" style="left:1265px;top:424px"><span class="p">}</span></div>

<div class="code" style="left:1265px;top:443px"><span class="p">&lt;/</span><span class="t">script</span><span class="p">&gt;</span></div>

<div class="code" style="left:1265px;top:462px"></div>

<div class="code" style="left:1265px;top:481px"><span class="p">&lt;</span><span class="t">style</span><span class="p">&gt;</span></div>

<div class="code" style="left:1265px;top:500px"></div>

<div class="code" style="left:1265px;top:519px"><span class="p">&lt;/</span><span class="t">style</span><span class="p">&gt;</span></div>

<div class="code" style="left:1265px;top:538px"></div>
<div class="abs" style="left:1781px;top:63px;width:77px;height:511px;background:#272822"></div>
<div class="abs" style="left:1777px;top:63px;width:6px;height:511px;background:linear-gradient(90deg,rgba(0,0,0,0),rgba(0,0,0,0.45))"></div>
<div class="abs" style="left:1791px;top:93px;width:67px;height:2px;background:#4a4b44"></div>
<svg class="abs" style="left:1791px;top:63px" width="67" height="250"><rect x="0" y="0" width="1" height="1" fill="#f8f8f2" fill-opacity="0.6"/><rect x="0" y="1" width="1" height="1" fill="#f8f8f2" fill-opacity="0.22"/><rect x="1" y="0" width="8" height="1" fill="#f92672" fill-opacity="0.6"/><rect x="1" y="1" width="8" height="1" fill="#f92672" fill-opacity="0.22"/><rect x="9" y="0" width="1" height="1" fill="#f8f8f2" fill-opacity="0.6"/><rect x="9" y="1" width="1" height="1" fill="#f8f8f2" fill-opacity="0.22"/><rect x="4" y="2" width="1" height="1" fill="#f8f8f2" fill-opacity="0.6"/><rect x="4" y="3" width="1" height="1" fill="#f8f8f2" fill-opacity="0.22"/><rect x="5" y="2" width="3" height="1" fill="#f92672" fill-opacity="0.6"/><rect x="5" y="3" width="3" height="1" fill="#f92672" fill-opacity="0.22"/><rect x="9" y="2" width="5" height="1" fill="#a6e22e" fill-opacity="0.6"/><rect x="9" y="3" width="5" height="1" fill="#a6e22e" fill-opacity="0.22"/><rect x="14" y="2" width="1" height="1" fill="#f8f8f2" fill-opacity="0.6"/><rect x="14" y="3" width="1" height="1" fill="#f8f8f2" fill-opacity="0.22"/><rect x="15" y="2" width="10" height="1" fill="#e6db74" fill-opacity="0.6"/><rect x="15" y="3" width="10" height="1" fill="#e6db74" fill-opacity="0.22"/><rect x="26" y="2" width="4" height="1" fill="#a6e22e" fill-opacity="0.6"/><rect x="26" y="3" width="4" height="1" fill="#a6e22e" fill-opacity="0.22"/><rect x="30" y="2" width="12" height="1" fill="#f8f8f2" fill-opacity="0.6"/><rect x="30" y="3" width="12" height="1" fill="#f8f8f2" fill-opacity="0.22"/><rect x="43" y="2" width="2" height="1" fill="#f92672" fill-opacity="0.6"/><rect x="43" y="3" width="2" height="1" fill="#f92672" fill-opacity="0.22"/><rect x="46" y="2" width="4" height="1" fill="#ae81ff" fill-opacity="0.6"/><rect x="46" y="3" width="4" height="1" fill="#ae81ff" fill-opacity="0.22"/><rect x="50" y="2" width="2" height="1" fill="#f8f8f2" fill-opacity="0.6"/><rect x="50" y="3" width="2" height="1" fill="#f8f8f2" fill-opacity="0.22"/><rect x="8" y="4" width="1" height="1" fill="#f8f8f2" fill-opacity="0.6"/><rect x="8" y="5" width="1" height="1" fill="#f8f8f2" fill-opacity="0.22"/><rect x="9" y="4" width="3" height="1" fill="#f92672" fill-opacity="0.6"/><rect x="9" y="5" width="3" height="1" fill="#f92672" fill-opacity="0.22"/><rect x="13" y="4" width="5" height="1" fill="#a6e22e" fill-opacity="0.6"/><rect x="13" y="5" width="5" height="1" fill="#a6e22e" fill-opacity="0.22"/><rect x="18" y="4" width="1" height="1" fill="#f8f8f2" fill-opacity="0.6"/><rect x="18" y="5" width="1" height="1" fill="#f8f8f2" fill-opacity="0.22"/><rect x="19" y="4" width="10" height="1" fill="#e6db74" fill-opacity="0.6"/><rect x="19" y="5" width="10" height="1" fill="#e6db74" fill-opacity="0.22"/><rect x="29" y="4" width="1" height="1" fill="#f8f8f2" fill-opacity="0.6"/><rect x="29" y="5" width="1" height="1" fill="#f8f8f2" fill-opacity="0.22"/><rect x="12" y="6" width="1" height="1" fill="#f8f8f2" fill-opacity="0.6"/><rect x="12" y="7" width="1" height="1" fill="#f8f8f2" fill-opacity="0.22"/><rect x="13" y="6" width="2" height="1" fill="#f92672" fill-opacity="0.6"/><rect x="13" y="7" width="2" height="1" fill="#f92672" fill-opacity="0.22"/><rect x="15" y="6" width="1" height="1" fill="#f8f8f2" fill-opacity="0.6"/><rect x="15" y="7" width="1" height="1" fill="#f8f8f2" fill-opacity="0.22"/><rect x="17" y="6" width="2" height="1" fill="#f8f8f2" fill-opacity="0.6"/><rect x="17" y="7" width="2" height="1" fill="#f8f8f2" fill-opacity="0.22"/><rect x="20" y="6" width="35" height="1" fill="#f8f8f2" fill-opacity="0.6"/><rect x="20" y="7" width="35" height="1" fill="#f8f8f2" fill-opacity="0.22"/><rect x="56" y="6" width="2" height="1" fill="#f8f8f2" fill-opacity="0.6"/><rect x="56" y="7" width="2" height="1" fill="#f8f8f2" fill-opacity="0.22"/><rect x="59" y="6" width="2" height="1" fill="#f8f8f2" fill-opacity="0.6"/><rect x="59" y="7" width="2" height="1" fill="#f8f8f2" fill-opacity="0.22"/><rect x="61" y="6" width="2" height="1" fill="#f92672" fill-opacity="0.6"/><rect x="61" y="7" width="2" height="1" fill="#f92672" fill-opacity="0.22"/><rect x="63" y="6" width="1" height="1" fill="#f8f8f2" fill-opacity="0.6"/><rect x="63" y="7" width="1" height="1" fill="#f8f8f2" fill-opacity="0.22"/><rect x="12" y="8" width="1" height="1" fill="#f8f8f2" fill-opacity="0.6"/><rect x="12" y="9" width="1" height="1" fill="#f8f8f2" fill-opacity="0.22"/><rect x="13" y="8" width="1" height="1" fill="#f92672" fill-opacity="0.6"/><rect x="13" y="9" width="1" height="1" fill="#f92672" fill-opacity="0.22"/><rect x="14" y="8" width="3" height="1" fill="#f8f8f2" fill-opacity="0.6"/><rect x="14" y="9" width="3" height="1" fill="#f8f8f2" fill-opacity="0.22"/><rect x="18" y="8" width="37" height="1" fill="#f8f8f2" fill-opacity="0.6"/><rect x="18" y="9" width="37" height="1" fill="#f8f8f2" fill-opacity="0.22"/><rect x="56" y="8" width="4" height="1" fill="#f8f8f2" fill-opacity="0.6"/><rect x="56" y="9" width="4" height="1" fill="#f8f8f2" fill-opacity="0.22"/><rect x="60" y="8" width="1" height="1" fill="#f92672" fill-opacity="0.6"/><rect x="60" y="9" width="1" height="1" fill="#f92672" fill-opacity="0.22"/><rect x="61" y="8" width="1" height="1" fill="#f8f8f2" fill-opacity="0.6"/><rect x="61" y="9" width="1" height="1" fill="#f8f8f2" fill-opacity="0.22"/><rect x="12" y="10" width="1" height="1" fill="#f8f8f2" fill-opacity="0.6"/><rect x="12" y="11" width="1" height="1" fill="#f8f8f2" fill-opacity="0.22"/><rect x="13" y="10" width="1" height="1" fill="#f92672" fill-opacity="0.6"/><rect x="13" y="11" width="1" height="1" fill="#f92672" fill-opacity="0.22"/><rect x="14" y="10" width="3" height="1" fill="#f8f8f2" fill-opacity="0.6"/><rect x="14" y="11" width="3" height="1" fill="#f8f8f2" fill-opacity="0.22"/><rect x="18" y="10" width="35" height="1" fill="#f8f8f2" fill-opacity="0.6"/><rect x="18" y="11" width="35" height="1" fill="#f8f8f2" fill-opacity="0.22"/><rect x="54" y="10" width="4" height="1" fill="#f8f8f2" fill-opacity="0.6"/><rect x="54" y="11" width="4" height="1" fill="#f8f8f2" fill-opacity="0.22"/><rect x="58" y="10" width="1" height="1" fill="#f92672" fill-opacity="0.6"/><rect x="58" y="11" width="1" height="1" fill="#f92672" fill-opacity="0.22"/><rect x="59" y="10" width="1" height="1" fill="#f8f8f2" fill-opacity="0.6"/><rect x="59" y="11" width="1" height="1" fill="#f8f8f2" fill-opacity="0.22"/><rect x="12" y="12" width="4" height="1" fill="#88846f" fill-opacity="0.6"/><rect x="12" y="13" width="4" height="1" fill="#88846f" fill-opacity="0.22"/><rect x="17" y="12" width="7" height="1" fill="#88846f" fill-opacity="0.6"/><rect x="17" y="13" width="7" height="1" fill="#88846f" fill-opacity="0.22"/><rect x="25" y="12" width="18" height="1" fill="#88846f" fill-opacity="0.6"/><rect x="25" y="13" width="18" height="1" fill="#88846f" fill-opacity="0.22"/><rect x="44" y="12" width="1" height="1" fill="#88846f" fill-opacity="0.6"/><rect x="44" y="13" width="1" height="1" fill="#88846f" fill-opacity="0.22"/><rect x="46" y="12" width="20" height="1" fill="#88846f" fill-opacity="0.6"/><rect x="46" y="13" width="20" height="1" fill="#88846f" fill-opacity="0.22"/><rect x="8" y="14" width="2" height="1" fill="#f8f8f2" fill-opacity="0.6"/><rect x="8" y="15" width="2" height="1" fill="#f8f8f2" fill-opacity="0.22"/><rect x="10" y="14" width="3" height="1" fill="#f92672" fill-opacity="0.6"/><rect x="10" y="15" width="3" height="1" fill="#f92672" fill-opacity="0.22"/><rect x="13" y="14" width="1" height="1" fill="#f8f8f2" fill-opacity="0.6"/><rect x="13" y="15" width="1" height="1" fill="#f8f8f2" fill-opacity="0.22"/><rect x="4" y="16" width="2" height="1" fill="#f8f8f2" fill-opacity="0.6"/><rect x="4" y="17" width="2" height="1" fill="#f8f8f2" fill-opacity="0.22"/><rect x="6" y="16" width="3" height="1" fill="#f92672" fill-opacity="0.6"/><rect x="6" y="17" width="3" height="1" fill="#f92672" fill-opacity="0.22"/><rect x="9" y="16" width="1" height="1" fill="#f8f8f2" fill-opacity="0.6"/><rect x="9" y="17" width="1" height="1" fill="#f8f8f2" fill-opacity="0.22"/><rect x="0" y="18" width="2" height="1" fill="#f8f8f2" fill-opacity="0.6"/><rect x="0" y="19" width="2" height="1" fill="#f8f8f2" fill-opacity="0.22"/><rect x="2" y="18" width="8" height="1" fill="#f92672" fill-opacity="0.6"/><rect x="2" y="19" width="8" height="1" fill="#f92672" fill-opacity="0.22"/><rect x="10" y="18" width="1" height="1" fill="#f8f8f2" fill-opacity="0.6"/><rect x="10" y="19" width="1" height="1" fill="#f8f8f2" fill-opacity="0.22"/><rect x="0" y="22" width="1" height="1" fill="#f8f8f2" fill-opacity="0.6"/><rect x="0" y="23" width="1" height="1" fill="#f8f8f2" fill-opacity="0.22"/><rect x="1" y="22" width="6" height="1" fill="#f92672" fill-opacity="0.6"/><rect x="1" y="23" width="6" height="1" fill="#f92672" fill-opacity="0.22"/><rect x="7" y="22" width="1" height="1" fill="#f8f8f2" fill-opacity="0.6"/><rect x="7" y="23" width="1" height="1" fill="#f8f8f2" fill-opacity="0.22"/><rect x="0" y="24" width="6" height="1" fill="#f92672" fill-opacity="0.6"/><rect x="0" y="25" width="6" height="1" fill="#f92672" fill-opacity="0.22"/><rect x="7" y="24" width="7" height="1" fill="#f92672" fill-opacity="0.6"/><rect x="7" y="25" width="7" height="1" fill="#f92672" fill-opacity="0.22"/><rect x="15" y="24" width="1" height="1" fill="#f8f8f2" fill-opacity="0.6"/><rect x="15" y="25" width="1" height="1" fill="#f8f8f2" fill-opacity="0.22"/><rect x="4" y="26" width="5" height="1" fill="#f8f8f2" fill-opacity="0.6"/><rect x="4" y="27" width="5" height="1" fill="#f8f8f2" fill-opacity="0.22"/><rect x="10" y="26" width="7" height="1" fill="#e6db74" fill-opacity="0.6"/><rect x="10" y="27" width="7" height="1" fill="#e6db74" fill-opacity="0.22"/><rect x="17" y="26" width="1" height="1" fill="#f8f8f2" fill-opacity="0.6"/><rect x="17" y="27" width="1" height="1" fill="#f8f8f2" fill-opacity="0.22"/><rect x="4" y="28" width="6" height="1" fill="#f8f8f2" fill-opacity="0.6"/><rect x="4" y="29" width="6" height="1" fill="#f8f8f2" fill-opacity="0.22"/><rect x="11" y="28" width="1" height="1" fill="#f8f8f2" fill-opacity="0.6"/><rect x="11" y="29" width="1" height="1" fill="#f8f8f2" fill-opacity="0.22"/><rect x="8" y="30" width="12" height="1" fill="#a6e22e" fill-opacity="0.6"/><rect x="8" y="31" width="12" height="1" fill="#a6e22e" fill-opacity="0.22"/><rect x="21" y="30" width="1" height="1" fill="#f8f8f2" fill-opacity="0.6"/><rect x="21" y="31" width="1" height="1" fill="#f8f8f2" fill-opacity="0.22"/><rect x="23" y="30" width="6" height="1" fill="#66d9ef" fill-opacity="0.6"/><rect x="23" y="31" width="6" height="1" fill="#66d9ef" fill-opacity="0.22"/><rect x="29" y="30" width="1" height="1" fill="#f8f8f2" fill-opacity="0.6"/><rect x="29" y="31" width="1" height="1" fill="#f8f8f2" fill-opacity="0.22"/><rect x="8" y="32" width="10" height="1" fill="#a6e22e" fill-opacity="0.6"/><rect x="8" y="33" width="10" height="1" fill="#a6e22e" fill-opacity="0.22"/><rect x="19" y="32" width="1" height="1" fill="#f8f8f2" fill-opacity="0.6"/><rect x="19" y="33" width="1" height="1" fill="#f8f8f2" fill-opacity="0.22"/><rect x="21" y="32" width="7" height="1" fill="#66d9ef" fill-opacity="0.6"/><rect x="21" y="33" width="7" height="1" fill="#66d9ef" fill-opacity="0.22"/><rect x="28" y="32" width="1" height="1" fill="#f8f8f2" fill-opacity="0.6"/><rect x="28" y="33" width="1" height="1" fill="#f8f8f2" fill-opacity="0.22"/><rect x="8" y="34" width="15" height="1" fill="#a6e22e" fill-opacity="0.6"/><rect x="8" y="35" width="15" height="1" fill="#a6e22e" fill-opacity="0.22"/><rect x="24" y="34" width="1" height="1" fill="#f8f8f2" fill-opacity="0.6"/><rect x="24" y="35" width="1" height="1" fill="#f8f8f2" fill-opacity="0.22"/><rect x="26" y="34" width="6" height="1" fill="#66d9ef" fill-opacity="0.6"/><rect x="26" y="35" width="6" height="1" fill="#66d9ef" fill-opacity="0.22"/><rect x="4" y="36" width="1" height="1" fill="#f8f8f2" fill-opacity="0.6"/><rect x="4" y="37" width="1" height="1" fill="#f8f8f2" fill-opacity="0.22"/><rect x="0" y="38" width="1" height="1" fill="#f8f8f2" fill-opacity="0.6"/><rect x="0" y="39" width="1" height="1" fill="#f8f8f2" fill-opacity="0.22"/><rect x="0" y="40" width="2" height="1" fill="#f8f8f2" fill-opacity="0.6"/><rect x="0" y="41" width="2" height="1" fill="#f8f8f2" fill-opacity="0.22"/><rect x="2" y="40" width="6" height="1" fill="#f92672" fill-opacity="0.6"/><rect x="2" y="41" width="6" height="1" fill="#f92672" fill-opacity="0.22"/><rect x="8" y="40" width="1" height="1" fill="#f8f8f2" fill-opacity="0.6"/><rect x="8" y="41" width="1" height="1" fill="#f8f8f2" fill-opacity="0.22"/><rect x="0" y="44" width="1" height="1" fill="#f8f8f2" fill-opacity="0.6"/><rect x="0" y="45" width="1" height="1" fill="#f8f8f2" fill-opacity="0.22"/><rect x="1" y="44" width="5" height="1" fill="#f92672" fill-opacity="0.6"/><rect x="1" y="45" width="5" height="1" fill="#f92672" fill-opacity="0.22"/><rect x="6" y="44" width="1" height="1" fill="#f8f8f2" fill-opacity="0.6"/><rect x="6" y="45" width="1" height="1" fill="#f8f8f2" fill-opacity="0.22"/><rect x="0" y="48" width="2" height="1" fill="#f8f8f2" fill-opacity="0.6"/><rect x="0" y="49" width="2" height="1" fill="#f8f8f2" fill-opacity="0.22"/><rect x="2" y="48" width="5" height="1" fill="#f92672" fill-opacity="0.6"/><rect x="2" y="49" width="5" height="1" fill="#f92672" fill-opacity="0.22"/><rect x="7" y="48" width="1" height="1" fill="#f8f8f2" fill-opacity="0.6"/><rect x="7" y="49" width="1" height="1" fill="#f8f8f2" fill-opacity="0.22"/></svg>
<div class="abs" style="left:1858px;top:63px;width:14px;height:511px;background:#272822;border-left:1px solid #3b3c36"></div>
<div class="abs" style="left:1868px;top:92px;width:4px;height:30px;background:#3794ff"></div><div class="abs" style="left:1868px;top:211px;width:4px;height:9px;background:#3794ff"></div><div class="abs" style="left:1859px;top:209px;width:13px;height:2px;background:#d0d0d0"></div>
<div class="abs" style="left:281px;top:574px;width:1591px;height:168px;background:#272822"></div>
<div class="abs" style="left:281px;top:574px;width:1591px;height:1px;background:#414339"></div>
<div class="abs ui" style="left:304px;top:581px;height:22px;line-height:22px;font-size:11px;color:#f8f8f2">문제</div><div class="abs ui" style="left:335px;top:584px;width:22px;height:18px;border-radius:9px;background:#75715e;color:#f8f8f2;font-size:11px;line-height:18px;text-align:center">17</div><div class="abs" style="left:301px;top:608px;width:26px;height:1px;background:#75715e"></div><div class="abs ui" style="left:379px;top:581px;height:22px;line-height:22px;font-size:11px;color:#75715e">출력</div><div class="abs ui" style="left:425px;top:581px;height:22px;line-height:22px;font-size:11px;color:#75715e">터미널</div><div class="abs ui" style="left:482px;top:581px;height:22px;line-height:22px;font-size:11px;color:#75715e">디버그 콘솔</div><div class="abs" style="left:1390px;top:581px;width:400px;height:24px;background:#414339"></div><div class="abs ui" style="left:1396px;top:581px;height:24px;line-height:25px;font-size:12.1px;color:#9a9990">필터(예: 텍스트, **/*.ts, !**/node_modules/**)</div><svg class="abs" style="left:1767px;top:585px" width="16" height="16" viewBox="0 0 16 16"><path d="M1.5 2.5 H14.5 L9.5 8.5 V14 L6.5 12.5 V8.5 Z" fill="none" stroke="#c5c5c5" stroke-width="1.1" stroke-linejoin="round"/></svg><svg class="abs" style="left:1796px;top:585px" width="16" height="16" viewBox="0 0 16 16"><rect x="2" y="5.5" width="8.5" height="8.5" fill="none" stroke="#c5c5c5" stroke-width="1.1"/><path d="M5.5 5.5 V2 H14 V10.5 H10.5 M4 9.8 H8.5" fill="none" stroke="#c5c5c5" stroke-width="1.1"/></svg><svg class="abs" style="left:1823px;top:585px" width="16" height="16" viewBox="0 0 16 16"><path d="M3 10.5 L8 5.5 L13 10.5" fill="none" stroke="#c5c5c5" stroke-width="1.2"/></svg><svg class="abs" style="left:1845px;top:585px" width="16" height="16" viewBox="0 0 16 16"><path d="M3.5 3.5 L12.5 12.5 M12.5 3.5 L3.5 12.5" stroke="#c5c5c5" stroke-width="1.2"/></svg>
<svg class="abs" style="left:292px;top:612px" width="16" height="16" viewBox="0 0 16 16"><path d="M3 5.5 L8 10.5 L13 5.5" fill="none" stroke="#c5c5c5" stroke-width="1.2"/></svg>
<svg class="abs" style="left:312px;top:614px" width="13.8" height="12" viewBox="0 0 261.76 226.69"><path d="M161.096.001l-30.225 52.351L100.647.001H-.005l130.877 226.688L261.749.001z" fill="#41b883"/><path d="M161.096.001l-30.225 52.351L100.647.001H52.346l78.526 136.01L209.398.001z" fill="#35495e"/></svg>
<div class="abs ui" style="left:333px;top:610px;height:22px;line-height:22px;font-size:13px;color:#cccccc">App.vue<span style="margin-left:6px;font-size:11.5px;color:#9d9d96">src</span></div>
<div class="abs ui" style="left:410px;top:612px;width:18px;height:18px;border-radius:9px;background:#75715e;color:#f8f8f2;font-size:11px;line-height:18px;text-align:center">6</div>
<div class="abs" style="left:281px;top:631px;width:1581px;height:110px;background:#414339"></div>
<div class="abs" style="left:281px;top:741px;width:1591px;height:1px;background:#262722"></div>
<div class="abs" style="left:297px;top:631px;width:1px;height:111px;background:#5c5d55"></div>
<svg class="abs" style="left:325px;top:634px" width="16" height="16" viewBox="0 0 16 16"><circle cx="8" cy="8" r="6.6" fill="none" stroke="#f14c4c" stroke-width="1.2"/><path d="M5.3 5.3 L10.7 10.7 M10.7 5.3 L5.3 10.7" stroke="#f14c4c" stroke-width="1.2"/></svg>
<svg class="abs" style="left:349px;top:634px" width="16" height="16" viewBox="0 0 16 16"><path d="M3.5 10 L8 5.5 L12.5 10" fill="none" stroke="#c5c5c5" stroke-width="1.2"/></svg>
<div class="abs ui" style="left:367px;top:631px;padding-top:1px;height:22px;line-height:22px;width:1495px;overflow:hidden;white-space:nowrap;text-overflow:ellipsis;color:#cccccc">Already included file name 'c:/Users/LG-User/Desktop/realrealreal_portfolio_start/vue_setting/vudongssan/src/components/card.vue' differs from file name 'c:/Users/LG-User/Desktop/realrealreal_portfolio_start/vue_setting/vudongssan/src/components/Card.vue' only in casing.</div>
<div class="abs ui" style="left:367px;top:653px;padding-top:1px;height:22px;line-height:22px;width:1495px;overflow:hidden;white-space:nowrap;text-overflow:ellipsis;color:#cccccc">The file is in the program because:</div>
<div class="abs ui" style="left:367px;top:675px;padding-top:1px;height:22px;line-height:22px;width:1495px;overflow:hidden;white-space:nowrap;text-overflow:ellipsis;color:#cccccc">Imported via './components/card.vue' from file 'c:/Users/LG-User/Desktop/realrealreal_portfolio_start/vue_setting/vudongssan/src/App.vue'</div>
<div class="abs ui" style="left:367px;top:697px;padding-top:1px;height:22px;line-height:22px;width:1495px;overflow:hidden;white-space:nowrap;text-overflow:ellipsis;color:#cccccc">Root file specified for compilation</div>
<div class="abs ui" style="left:367px;top:719px;padding-top:1px;height:22px;line-height:22px;width:1495px;overflow:hidden;white-space:nowrap;text-overflow:ellipsis;color:#cccccc">Root file specified for compilation<span style="color:#a09f96;margin-left:6px">Vetur(1261)</span><span style="color:#a09f96;margin-left:8px">[20, 18]</span></div>
<div class="abs" style="left:1862px;top:609px;width:10px;height:133px;background:#31322c"></div>
</body></html>
